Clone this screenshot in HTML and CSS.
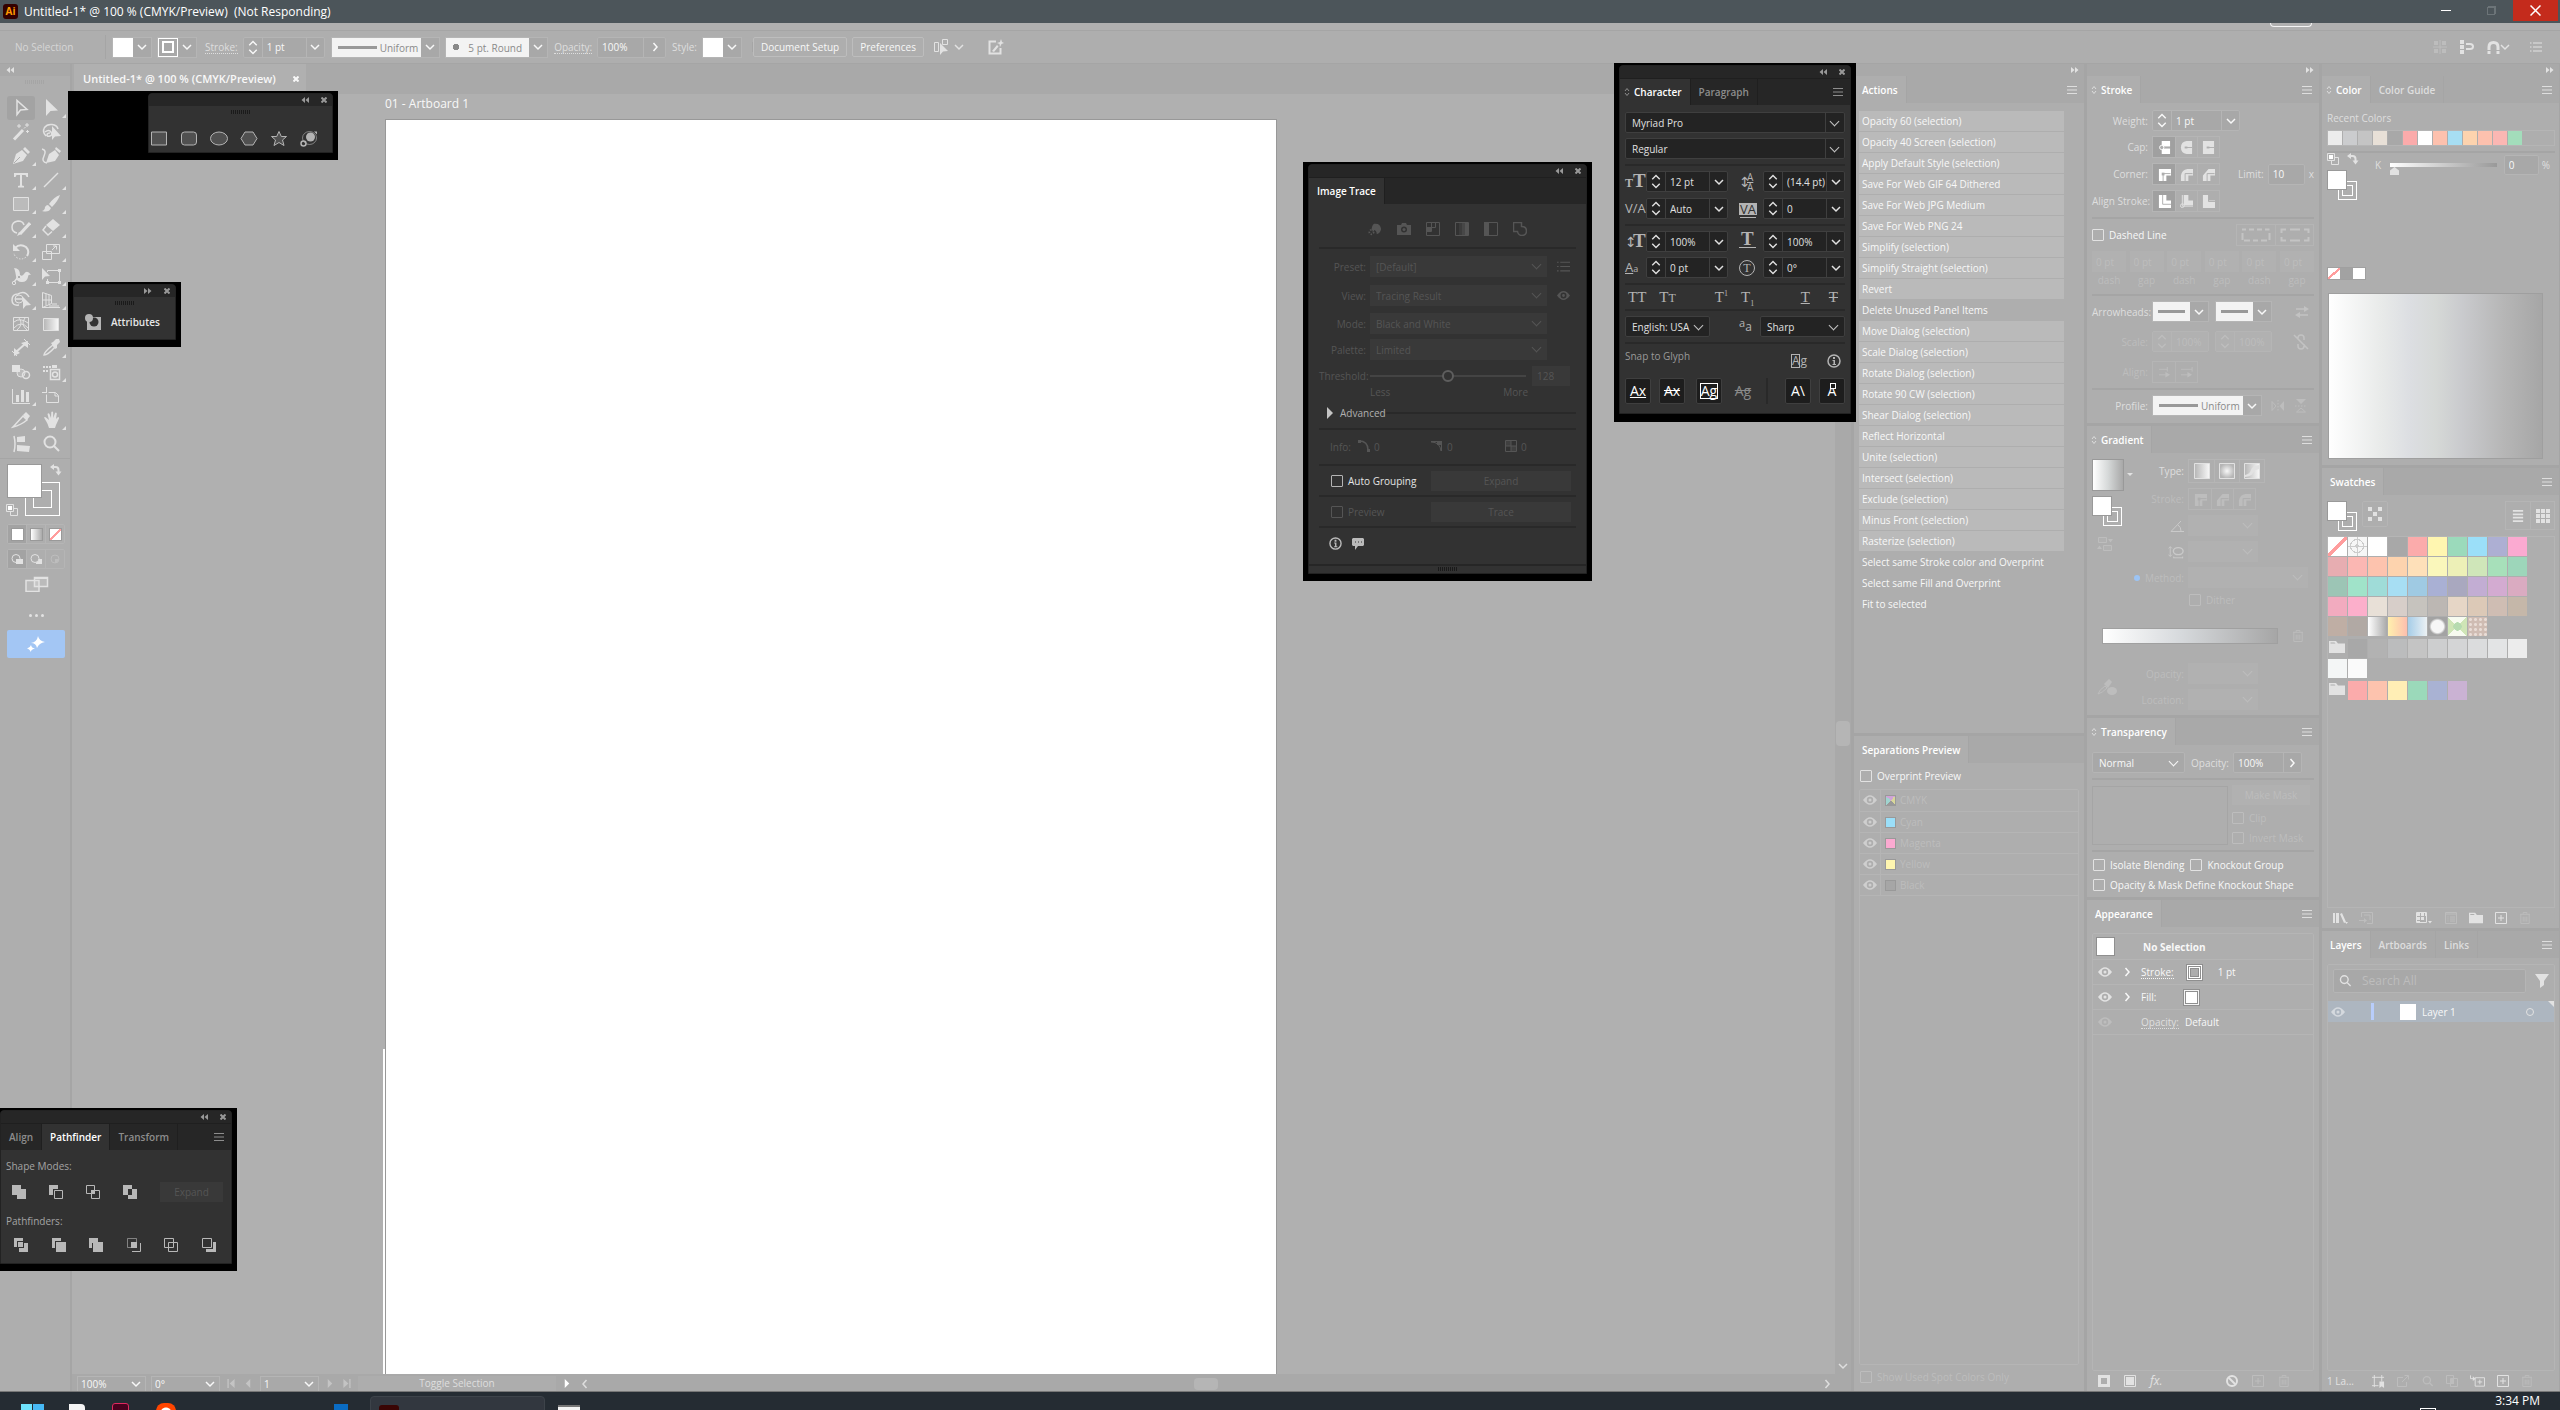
FILE: index.html
```html
<!DOCTYPE html>
<html lang="en">
<head>
    <meta charset="UTF-8">
    <meta name="viewport" content="width=device-width, initial-scale=1.0">
    <title>Untitled-1* @ 100 % (CMYK/Preview)</title>
    <link rel="stylesheet" href="styles.css">
</head>
<body>
<svg class="sprite" aria-hidden="true">
    <defs>
        <linearGradient id="fade"><stop offset="0" stop-color="currentColor" stop-opacity=".1"/><stop offset="1" stop-color="currentColor"/></linearGradient>
        <radialGradient id="glow"><stop offset="0" stop-color="currentColor"/><stop offset="1" stop-color="currentColor" stop-opacity=".1"/></radialGradient>
    </defs>
    <!-- common -->
    <symbol id="chev" viewBox="0 0 10 10"><path d="M1 3l4 4 4-4" class="ln w15"/></symbol>
    <symbol id="chev-r" viewBox="0 0 10 10"><path d="M3.500 1l3.500 4-3.500 4" class="ln w15"/></symbol>
    <symbol id="chev-l" viewBox="0 0 10 10"><path d="M6.500 1L3 5l3.500 4" class="ln w15"/></symbol>
    <symbol id="step" viewBox="0 0 10 16"><path d="M1 5.500l4-4 4 4M1 10.500l4 4 4-4" class="ln w15"/></symbol>
    <symbol id="updown" viewBox="0 0 6 10"><path d="M1 4l2-2.500L5 4M1 6l2 2.500L5 6" class="ln"/></symbol>
    <symbol id="dbl-l" viewBox="0 0 8 6"><path d="M4 0v6L.5 3zM8 0v6L4.500 3z"/></symbol>
    <symbol id="dbl-r" viewBox="0 0 8 6"><path d="M0 0v6l3.500-3zM4 0v6l3.500-3z"/></symbol>
    <symbol id="x" viewBox="0 0 6 6"><path d="M.5.5l5 5M5.500.5l-5 5" class="ln w2"/></symbol>
    <symbol id="burger" viewBox="0 0 10 8"><path d="M0 .5h10M0 4h10M0 7.500h10" class="ln"/></symbol>
    <symbol id="eye" viewBox="0 0 14 10"><path fill-rule="evenodd" d="M0 5q7-9.500 14 0-7 9.500-14 0zm7-3.200a3.200 3.200 0 1 0 0 6.400 3.200 3.200 0 0 0 0-6.400zm0 1.700a1.500 1.500 0 1 1 0 3 1.500 1.500 0 0 1 0-3z"/></symbol>
    <symbol id="tri-r" viewBox="0 0 6 12"><path d="M0 0l6 6-6 6z"/></symbol>
    <symbol id="tri-l" viewBox="0 0 6 12"><path d="M6 0L0 6l6 6z"/></symbol>
    <symbol id="first" viewBox="0 0 8 10"><path d="M8 0L2.500 5 8 10zM0 0h1.500v10H0z"/></symbol>
    <symbol id="last" viewBox="0 0 8 10"><path d="M0 0l5.500 5L0 10zM6.500 0H8v10H6.500z"/></symbol>
    <symbol id="plus" viewBox="0 0 12 12"><path d="M.5.5h11v11H.5zM6 3v6M3 6h6" class="ln"/></symbol>
    <symbol id="trash" viewBox="0 0 12 13"><path d="M.5 2.500h11M4 2V.5h4V2M1.500 2.500v10h9v-10M4 5v5.500M6 5v5.500M8 5v5.500" class="ln"/></symbol>
    <symbol id="folder" viewBox="0 0 16 12"><path d="M0 0h7l2 2.500h7V12H0z"/><path d="M1.500 1.500h4l1 1h-5z" class="cut"/></symbol>
    <symbol id="swap" viewBox="0 0 12 12"><path d="M3 3h2.500q3 0 3 3v2" class="ln w2"/><path d="M4 0v6L0 3zM5.500 7.500h6l-3 4z"/></symbol>
    <symbol id="deflt" viewBox="0 0 12 12"><path d="M4.500 8v3.500h7v-7H8M.5.5h7v7h-7z" class="ln"/><path d="M2 2h4v4H2z" class="white"/></symbol>
    <symbol id="list" viewBox="0 0 12 9"><path d="M0 .5h1.500M3 .5h9M0 4.500h1.500M3 4.500h9M0 8.500h1.500M3 8.500h9" class="ln"/></symbol>
    <symbol id="info" viewBox="0 0 14 14"><circle cx="7" cy="7" r="6" class="ln w15"/><path d="M6 3h2v2H6zM5.500 6H8v4h1v1H5.500v-1h1V7h-1z"/></symbol>
    <!-- tools -->
    <symbol id="t-select" viewBox="0 0 20 20"><path d="M6 2.500v14l3.500-4.500 6.500-.5z" class="ln w15"/></symbol>
    <symbol id="t-direct" viewBox="0 0 20 20"><path d="M5 1v17l4.500-5 7.500-.5z"/></symbol>
    <symbol id="t-wand" viewBox="0 0 20 20"><path d="M3 17.500 12 8" class="ln w3"/><path d="M13 6.500l1.500-1.500M16 1v4M14 3h4M8 2v4M6 4h4M16.500 8v3M15 9.500h3" class="ln"/></symbol>
    <symbol id="t-lasso" viewBox="0 0 20 20"><path d="M5 14q-4-4-1.500-8.500Q6 2 11 2.500T17 7M4 10q4-3 6 0t-1 4q-3 1-3-1t3-2" class="ln w15"/><path d="M11 4v14l3-3.500 6-.5z"/></symbol>
    <symbol id="t-pen" viewBox="0 0 20 20"><path d="M2 18l3-10 6-4 5 5-4 6zM12 3l2-2 5 5-2 2z"/><path d="M3 17l6-6" class="ln cutln"/></symbol>
    <symbol id="t-curv" viewBox="0 0 20 20"><path d="M5 17l3-9 6-4 4 5-4 6zM14 3l1-2 5 4-1.500 2z"/><path d="M1 3q5 1 2 7t3 7" class="ln w15"/></symbol>
    <symbol id="t-type" viewBox="0 0 20 20"><path d="M3 3h14v4h-1.500l-1-2H11v10.500l2 .5v1.500H7V16l2-.5V5H5.500l-1 2H3z"/></symbol>
    <symbol id="t-line" viewBox="0 0 20 20"><path d="M3 17 17 3" class="ln w15"/></symbol>
    <symbol id="t-rect" viewBox="0 0 20 20"><path d="M2.500 3.500h15v13h-15z" class="ln soft"/></symbol>
    <symbol id="t-brush" viewBox="0 0 20 20"><path d="M19 1q-6 2-11 9l3 3q6-6 8-12zM7 11l3 3q-2 5-9 3 3-1 3-4 1-2 3-2z"/></symbol>
    <symbol id="t-shaper" viewBox="0 0 20 20"><path d="M6 15q-5-1-5-6t6-6q5 0 6 4" class="ln w15"/><path d="M9 16l10-11" class="ln w3"/><path d="M6 18l2-4 2.500 2z"/></symbol>
    <symbol id="t-eraser" viewBox="0 0 20 20"><path d="M12 1l7 6-7 6-7-6z"/><path d="M5 8l-3 4 5 5 4-3.500" class="ln w15"/></symbol>
    <symbol id="t-rotate" viewBox="0 0 20 20"><path d="M4 6q5-5 11-1 4 4 1 9" class="ln w2"/><path d="M15 15q-5 4-10 0-2-2-2-4" class="ln dots"/><path d="M2 2v7h7z"/></symbol>
    <symbol id="t-scale" viewBox="0 0 20 20"><path d="M5.500 2.500h13v9h-13zM1.500 9.500h9v8h-9zM11 8l4-4M12 4h3.500v3.500" class="ln"/></symbol>
    <symbol id="t-width" viewBox="0 0 20 20"><path d="M3 16l5-6" class="ln w15"/><path d="M3 2q6 0 6 7 2 2 4-1 3-5 7 1-3-1-3 2-1 5-6 5-6 0-6-6-1-6-2-8z"/><circle cx="3" cy="17" r="1.700" class="ln"/><circle cx="8" cy="11" r="1.700" class="ln bgfill"/></symbol>
    <symbol id="t-free" viewBox="0 0 20 20"><path d="M1 2v12l3-3.500 5-.5z"/><path d="M6.500 6V4.500h12v12h-12V13" class="ln"/><path d="M17 3h3v3h-3zM17 15h3v3h-3zM5 15h3v3H5z"/></symbol>
    <symbol id="t-builder" viewBox="0 0 20 20"><path d="M8 15q-7 1-7-5t6-6q7-4 11 3M4 9h8" class="ln w15"/><circle cx="8" cy="9" r="4" class="ln"/><path d="M12 7v12l3-3.500 5-.5z"/></symbol>
    <symbol id="t-persp" viewBox="0 0 20 20"><path d="M1.500 2.500v15l9-4v-8zM5 3.500v12M1.500 10h9M8 4.500v10M11 14h5M8 16h10M1 17.500h18" class="ln"/></symbol>
    <symbol id="t-mesh" viewBox="0 0 20 20"><path d="M2.500 3.500h15v13h-15zM3 8q6-5 14 1M3 14q7-8 14 0M8 4q5 6-2 12M14 4q-5 6 2 12" class="ln"/></symbol>
    <symbol id="t-grad" viewBox="0 0 20 20"><path d="M2.500 4.500h15v12h-15z" fill="url(#fade)" stroke="currentColor"/></symbol>
    <symbol id="t-measure" viewBox="0 0 20 20"><path d="M5 14l9-8" class="ln w2"/><path d="M3 10v8l6-3zM17 10V3l-7 2z"/><path d="M1 13l5 5M13 1l6 6" class="ln"/></symbol>
    <symbol id="t-eyedrop" viewBox="0 0 20 20"><path d="M3 17q0-3 9-10l2 2q-7 8-11 8z" class="ln w15"/><path d="M10 5l2-1 3-3h3l1 3-3 3v3l-2 1z"/></symbol>
    <symbol id="t-blend" viewBox="0 0 20 20"><path d="M1 3h8v7H1z"/><circle cx="10" cy="11" r="4" class="ln soft"/><circle cx="15" cy="13" r="3.500" class="ln w15"/></symbol>
    <symbol id="t-spray" viewBox="0 0 20 20"><path d="M9.500 7.500h9v10h-9z" class="ln w15"/><path d="M11 3h5v3h-5zM2 4h2v2H2zM5 4h2v2H5zM8 4h2v2H8zM2 8h2v2H2zM5 8h2v2H5z"/><circle cx="14" cy="12.500" r="2.500" class="ln w15"/></symbol>
    <symbol id="t-graph" viewBox="0 0 20 20"><path d="M1.500 3v14.500H19" class="ln"/><path d="M5 9h3v7H5zM10 4h3v12h-3zM15 6h3v10h-3z"/></symbol>
    <symbol id="t-artb" viewBox="0 0 20 20"><path d="M5.500 1v5M1 6.500h5M5.500 8.500v8h12v-7l-3-3h-7M14 7v3h3" class="ln"/></symbol>
    <symbol id="t-slice" viewBox="0 0 20 20"><path d="M2 17L12 6l4 4q-6 5-14 7z" class="ln w15"/><path d="M12 5l3-3 4 4-3 4z"/></symbol>
    <symbol id="t-hand" viewBox="0 0 20 20"><path d="M5 11L3 7.500q1-1 2 0L8 10 6.500 4q1-1.500 2 0L10 8l.3-6q1-1 1.800 0l.2 6 1.700-5q1.200-1 1.800.5L15 9l2-2q1.500 0 1 1.500L15 15l-1 3H8q-1-4-3-7z"/></symbol>
    <symbol id="t-print" viewBox="0 0 20 20"><path d="M3 2q2 8 0 16" class="ln w15"/><path d="M6 3l8-1v6H6zM6 11l13 1-1 6-12-1z"/></symbol>
    <symbol id="t-zoom" viewBox="0 0 20 20"><circle cx="9" cy="8" r="5.500" class="ln w2"/><path d="M13 12l5 5" class="ln w2"/></symbol>
    <symbol id="t-screen" viewBox="0 0 24 16"><path d="M1 4.500h13v11H1z" class="ln soft w15"/><path d="M9.500 1.500h13v9h-13z" class="ln soft w15"/><path d="M9 1h14v2H9z"/></symbol>
    <symbol id="d-norm" viewBox="0 0 12 10"><circle cx="5" cy="4.500" r="4" class="ln"/><path d="M5 5h7v5H5z"/></symbol>
    <symbol id="d-back" viewBox="0 0 12 10"><path d="M6 5h6v5H6z"/><circle cx="5" cy="4.500" r="4" class="ln bgfill"/></symbol>
    <symbol id="d-in" viewBox="0 0 12 10"><circle cx="6" cy="5" r="4" class="ln"/><path d="M6 5h4l-2 4H6z"/></symbol>
    <symbol id="spark" viewBox="0 0 18 16"><path d="M11 0q1 5 7 6-6 1-8 6-1-5-6-5 6-1 7-7zM4 9q.5 3 4 3.500-3.500.5-4.500 3.500Q3 13 0 12.500 3 12 4 9z"/></symbol>
    <!-- shapes -->
    <symbol id="s-rect" viewBox="0 0 18 14"><path d="M1.500.5h15v13h-15z" class="shape"/></symbol>
    <symbol id="s-round" viewBox="0 0 18 14"><rect x="1.500" y=".5" width="15" height="13" rx="3" class="shape"/></symbol>
    <symbol id="s-ell" viewBox="0 0 18 14"><ellipse cx="9" cy="7" rx="8.500" ry="6.500" class="shape"/></symbol>
    <symbol id="s-hex" viewBox="0 0 18 14"><path d="M5 .5h8L17 7l-4 6.500H5L1 7z" class="shape"/></symbol>
    <symbol id="s-star" viewBox="0 0 18 16"><path d="M9 1l2.300 5h5.200l-4 3.500L14 15l-5-3-5 3 1.500-5.500-4-3.500h5.200z" class="shape"/></symbol>
    <symbol id="s-flare" viewBox="0 0 18 16"><ellipse cx="9.500" cy="7.500" rx="7" ry="6.500" class="ln" opacity=".6"/><circle cx="10.500" cy="6.500" r="4.500"/><circle cx="3.500" cy="13" r="2.500" class="ln w15"/><path d="M14 1h3v3z"/></symbol>
    <symbol id="attr" viewBox="0 0 16 16"><path d="M2 3h14v13H2z"/><circle cx="9" cy="8" r="4.500" class="cut"/><circle cx="4" cy="4" r="4"/></symbol>
    <!-- pathfinder -->
    <symbol id="p-unite" viewBox="0 0 14 14"><path d="M0 0h9v4h5v10H5v-4H0z"/></symbol>
    <symbol id="p-minus" viewBox="0 0 14 14"><path d="M0 0h9v4H4v6H0z"/><path d="M5.500 5.500h8v8h-8z" class="ln"/></symbol>
    <symbol id="p-inter" viewBox="0 0 14 14"><path d="M.5.5h8v8h-8zM5.500 5.500h8v8h-8z" class="ln"/><path d="M5 5h4v4H5z"/></symbol>
    <symbol id="p-excl" viewBox="0 0 14 14"><path fill-rule="evenodd" d="M0 0h9v4h5v10H5v-4H0zm5 4v6h4V4z"/></symbol>
    <symbol id="p-divide" viewBox="0 0 14 14"><path d="M0 0h9v3H3v6H0zM4 4h5v5H4zM10 5h4v9H5v-4h5z"/></symbol>
    <symbol id="p-trim" viewBox="0 0 14 14"><path d="M0 0h9v3H3v7H0zM4 4h10v10H4z"/></symbol>
    <symbol id="p-merge" viewBox="0 0 14 14"><path d="M0 0h9v4h5v10H4V5H3v5H0z"/></symbol>
    <symbol id="p-crop" viewBox="0 0 14 14"><path d="M.5.5h9v9h-9z" class="ln" opacity=".6"/><path d="M4 4h6v6H4z"/><path d="M13.500 5v8.500H5" class="ln"/></symbol>
    <symbol id="p-outline" viewBox="0 0 14 14"><path d="M.5.5h9v9h-9zM4.500 4.500h9v9h-9z" class="ln"/></symbol>
    <symbol id="p-back" viewBox="0 0 14 14"><path d="M.5.5h9v9h-9z" class="ln"/><path d="M11 4h3v10H4v-3h7z"/></symbol>
    <!-- image trace -->
    <symbol id="i-auto" viewBox="0 0 16 14"><path d="M7 1q7-1 8 6-1 5-5 6 0-4-3-5-2 0-3 1 0-6 3-8z"/><circle cx="4" cy="10.500" r="2.500" class="ln w2 dots"/></symbol>
    <symbol id="i-cam" viewBox="0 0 14 12"><path fill-rule="evenodd" d="M0 2h4l1-2h4l1 2h4v10H0zm7 1.500a3 3 0 1 0 0 6 3 3 0 0 0 0-6z"/><circle cx="7" cy="6.500" r="1.500"/></symbol>
    <symbol id="i-low" viewBox="0 0 14 14"><path d="M.5.5h13v13H.5zM5.500.5v9H.5M.5 5.500h9v-5" class="ln"/><path d="M1 6h4v4H1z"/></symbol>
    <symbol id="i-gray" viewBox="0 0 14 14"><path d="M.5.5h13v13H.5z" class="ln"/><path d="M4 1h3v12H4z" opacity=".3"/><path d="M7 1h3v12H7z" opacity=".6"/><path d="M10 1h3v12h-3z"/></symbol>
    <symbol id="i-bw" viewBox="0 0 14 14"><path d="M.5.5h13v13H.5z" class="ln"/><path d="M0 0h5v14H0z"/></symbol>
    <symbol id="i-out" viewBox="0 0 14 14"><path d="M.5.5h8v4q5 0 5 4.500t-5 4.500Q5 13 4.500 9.500h-4z" class="ln w15"/></symbol>
    <symbol id="i-path" viewBox="0 0 12 12"><path d="M1 1q9 0 9 9" class="ln w15"/><path d="M0 0h3v3H0zM9 9h3v3H9z"/></symbol>
    <symbol id="i-anch" viewBox="0 0 12 12"><path d="M0 2q9 0 10 9" class="ln"/><path d="M0 1h11v10h-1V5H6V2H0z"/></symbol>
    <symbol id="i-cols" viewBox="0 0 12 12"><path d="M.5.5h11v11H.5zM6 0v12M0 6h12" class="ln"/><path d="M1 1h5v5H1zM6 6h5v5H6z" opacity=".4"/></symbol>
    <symbol id="i-chat" viewBox="0 0 12 12"><path d="M1 0h10l1 1v6l-1 1H6l-3 4V8H1L0 7V1z"/><path d="M3 4h1M6 4h1M9 4h1" class="ln cutln"/></symbol>
    <!-- stroke -->
    <symbol id="c-butt" viewBox="0 0 14 14"><path d="M4 0h9v6H4zM4 8h9v6H4z"/><path d="M4 7h9" class="ln cutln"/><circle cx="4" cy="7" r="2.300" class="ln bgfill"/></symbol>
    <symbol id="c-round" viewBox="0 0 14 14"><path d="M13 0v14H7Q1 13 1 7t6-7z"/><path d="M6 7h7" class="ln cutln"/><path d="M5 6h3v2H5z" class="cut"/></symbol>
    <symbol id="c-proj" viewBox="0 0 14 14"><path d="M1 0h12v14H1z"/><path d="M6 7h7" class="ln cutln"/><path d="M5 6h3v2H5z" class="cut"/></symbol>
    <symbol id="j-miter" viewBox="0 0 14 14"><path d="M1 1h13v7H9v6H1z"/><path d="M5.500 14V6h8" class="ln cutln"/><path d="M4 5h3v3H4z" class="cut"/></symbol>
    <symbol id="j-round" viewBox="0 0 14 14"><path d="M14 1v7H9v6H1V8q1-6 7-7z"/><path d="M5.500 14V6h8" class="ln cutln"/></symbol>
    <symbol id="j-bevel" viewBox="0 0 14 14"><path d="M14 1v7H9v6H1V8l6-7z"/><path d="M5.500 14V6h8" class="ln cutln"/></symbol>
    <symbol id="a-mid" viewBox="0 0 14 14"><path d="M1 0h8v6h5v8H1z"/><path d="M5 0v10h9" class="ln cutln"/></symbol>
    <symbol id="a-in" viewBox="0 0 14 14"><path d="M4 0h5v6h5v5H4z"/><path d="M2.500 0v12H14" class="ln"/><circle cx="2.500" cy="11.500" r="2" class="ln"/></symbol>
    <symbol id="a-out" viewBox="0 0 14 14"><path d="M1 0h6v6h7v8H1z"/><path d="M7 0v7h7" class="ln cutln"/></symbol>
    <symbol id="dash-a" viewBox="0 0 30 14"><path d="M1.500 12V5M1 1.500h4M8 1.500h5M16 1.500h5M24 1.500h4.500M28.500 5v7M3 12.500h6M12 12.500h5M20 12.500h6" class="ln w2"/></symbol>
    <symbol id="dash-b" viewBox="0 0 30 14"><path d="M1.500 5V1.500H6M24 1.500h4.500V5M28.500 9v3.500H24M6 12.500H1.500V9M10 1.500h10M10 12.500h10" class="ln w2"/></symbol>
    <symbol id="arrows" viewBox="0 0 14 12"><path d="M1 3h10M3 9h10" class="ln w15"/><path d="M9 0l5 3-5 3zM5 6L0 9l5 3z"/></symbol>
    <symbol id="unlink" viewBox="0 0 16 16"><path d="M5 6V4q0-3 3-3t3 3v2M5 10v2q0 3 3 3t3-3v-2M1 1l14 14" class="ln w15"/></symbol>
    <symbol id="al-a" viewBox="0 0 14 12"><path d="M1 2.500h9M1 8.500h8M10 0v5" class="ln"/><path d="M8 5.500l5 3-5 3z"/></symbol>
    <symbol id="al-b" viewBox="0 0 14 12"><path d="M1 2.500h12M1 8.500h8M13 0v5" class="ln"/><path d="M8 5.500l5 3-5 3z"/></symbol>
    <symbol id="flip-h" viewBox="0 0 14 12"><path d="M1 1.500v9L5 6z" class="ln"/><path d="M13 1v10L8.500 6z"/><path d="M7 0v12" class="ln dots"/></symbol>
    <symbol id="flip-v" viewBox="0 0 12 14"><path d="M1.500 13h9L6 9z" class="ln"/><path d="M1 0h10L6 5z"/><path d="M0 7h12" class="ln dots"/></symbol>
    <symbol id="angle" viewBox="0 0 14 12"><path d="M14 11.500H1L11 1M8 5q3 2 3 6" class="ln"/></symbol>
    <symbol id="aspect" viewBox="0 0 18 14"><path d="M2.500 1v11M.5 3l2-2 2 2M.5 10l2 2 2-2M6 13.500h11M6.500 12v2M16.500 12v2" class="ln"/><ellipse cx="11.500" cy="6" rx="5.500" ry="4" class="ln w15"/></symbol>
    <symbol id="g-lin" viewBox="0 0 16 16"><path d="M.5.5h15v15H.5z" fill="url(#fade)" stroke="currentColor"/></symbol>
    <symbol id="g-rad" viewBox="0 0 16 16"><path d="M.5.5h15v15H.5z" fill="url(#glow)" stroke="currentColor"/></symbol>
    <symbol id="g-free" viewBox="0 0 16 16"><path d="M.5.5h15v15H.5z" fill="url(#fade)" stroke="currentColor"/><path d="M1 12q5-1 6-5t8-5v4q-5 1-6 4t-8 4z"/></symbol>
    <symbol id="rev" viewBox="0 0 16 14"><path d="M1.500.5h8v5h-8zM6.500 8.500h8v5h-8z" class="ln soft"/><path d="M11 2h5l-2.500 3.500zM0 12h5L2.500 8.500z"/></symbol>
    <symbol id="pick" viewBox="0 0 20 16"><path d="M1 15q1-4 7-8l2 2q-5 5-9 6z" class="ln"/><path d="M7 5l5-5 3 3-4 6z"/><ellipse cx="15" cy="12" rx="5" ry="4"/></symbol>
    <!-- footer and header icons -->
    <symbol id="box" viewBox="0 0 12 12"><path d="M1.500 1.500h9v9h-9z" class="ln w3"/></symbol>
    <symbol id="boxin" viewBox="0 0 12 12"><path d="M.5.5h11v11H.5z" class="ln"/><path d="M2 2h8v8H2z"/></symbol>
    <symbol id="nope" viewBox="0 0 12 12"><circle cx="6" cy="6" r="5" class="ln w2"/><path d="M2.500 2.500l7 7" class="ln w2"/></symbol>
    <symbol id="lib" viewBox="0 0 16 12"><path d="M1 1h2v10H1zM4 1h3v10H4zM8 2l2-1 4 9-2 1zM13 10h3l-1.500 2z"/></symbol>
    <symbol id="addlib" viewBox="0 0 14 12"><path d="M2.500 5V.5h11v11H8M0 8.500h6M5 3h6v5" class="ln"/><path d="M5 6l3 2.500L5 11z"/></symbol>
    <symbol id="kinds" viewBox="0 0 16 12"><path d="M1 1h3v3H1zM5 1h3v3H5zM9 1h2v3H9zM1 5h3v3H1zM5 5h3v3H5zM1 9h3v2H1zM12 9h4l-2 2.500z"/><path d="M.5.5h10v10H.5z" class="ln"/></symbol>
    <symbol id="opts" viewBox="0 0 12 12"><path d="M.5.5h11v11H.5zM.5 2h11M2.500 5h1M5 5h5M2.500 7h1M5 7h5M2.500 9h1M5 9h5" class="ln"/></symbol>
    <symbol id="rows" viewBox="0 0 12 14"><path d="M0 1h12M0 5h12M0 9h12M0 13h12" class="ln w2"/></symbol>
    <symbol id="grid" viewBox="0 0 14 14"><path d="M0 0h4v4H0zM5 0h4v4H5zM10 0h4v4h-4zM0 5h4v4H0zM5 5h4v4H5zM10 5h4v4h-4zM0 10h4v4H0zM5 10h4v4H5zM10 10h4v4h-4z"/></symbol>
    <symbol id="five" viewBox="0 0 14 14"><path d="M0 0h4v4H0zM10 0h4v4h-4zM5 5h4v4H5zM0 10h4v4H0zM10 10h4v4h-4z"/></symbol>
    <symbol id="funnel" viewBox="0 0 14 14"><path d="M0 0h14L9 7v4l-4 3V7z"/></symbol>
    <symbol id="mkart" viewBox="0 0 14 14"><path d="M2.500 0v13M0 2.500h13M10.500 0v7M0 11.500h7" class="ln"/><path d="M8 7h5v7l-2.500-2L8 14z"/></symbol>
    <symbol id="export" viewBox="0 0 12 12"><path d="M6 2.500H.5v9h9V7M5 7l6-6M7.500.5h4v4" class="ln"/></symbol>
    <symbol id="mask" viewBox="0 0 12 12"><path d="M.5.5h7v8h-7zM4.500 3.500h7v8h-7z" class="ln"/><path d="M4 4h4v5H4z"/></symbol>
    <symbol id="sublayer" viewBox="0 0 16 12"><path d="M5.500 2.500h10v9h-10zM10.500 4.500v5M8 7h5M.5 0v3.500H4" class="ln"/><path d="M3 1l3 2.500L3 6z"/></symbol>
    <symbol id="alignto" viewBox="0 0 16 16"><path d="M1.500 3.500h4v9h-4zM9.500.5h5v5h-5z" class="ln"/><path d="M7 4v12l3-3.500 5-.5z"/></symbol>
    <symbol id="generate" viewBox="0 0 16 16"><path d="M8 2.500H1.500v12h11V9" class="ln w2"/><path d="M13 0l1 3 2 1-2.500 1L12 8l-.5-3L9 4l3-1zM4 12l5-6 1.500 1.500L6 13z"/></symbol>
    <symbol id="quad" viewBox="0 0 14 14"><path d="M1 1h4v4H1zM9 1h4v4H9zM1 9h4v4H1zM9 9h4v4H9z"/><path d="M7 0v14M0 7h14" class="ln"/></symbol>
    <symbol id="snapm" viewBox="0 0 14 14"><path d="M0 0h4v4H0zM0 5h4v4H0zM0 10h4v4H0z"/><path d="M6 4h4q3 0 3 2.500T10 9H6" class="ln w2"/></symbol>
    <symbol id="magnet" viewBox="0 0 12 13"><path d="M1.500 9V6q0-4.500 4.500-4.500T10.500 6v3" class="ln w3"/><path d="M0 10h3v3H0zM9 10h3v3H9z"/></symbol>
</svg>

<header class="titlebar">
    <span class="app-icon">Ai</span>
    <h1 class="title">Untitled-1* @ 100 % (CMYK/Preview)&nbsp; (Not Responding)</h1>
    <div class="window-buttons">
        <button aria-label="Minimize"><span class="min"></span></button>
        <button aria-label="Restore"><span class="restore"></span></button>
        <button class="close" aria-label="Close"><svg width="11" height="11" viewBox="0 0 11 11"><path d="M.5.5l10 10M10.500.5l-10 10" class="ln w15"/></svg></button>
    </div>
</header>
<div class="menu-strip"><span class="share"></span></div>

<div class="control-bar">
    <span class="no-selection">No Selection</span>
    <button class="pick pick-white" aria-label="Fill"><i></i><svg class="i10"><use href="#chev"/></svg></button>
    <button class="pick pick-stroke" aria-label="Stroke color"><i></i><svg class="i10"><use href="#chev"/></svg></button>
    <label class="dotted dim" for="cb-stroke">Stroke:</label>
    <span class="spin cb-weight"><svg class="stepper"><use href="#step"/></svg><input id="cb-stroke" value="1 pt"><button aria-label="Weights"><svg class="i10"><use href="#chev"/></svg></button></span>
    <button class="pick brush"><i class="rule"></i><b>Uniform</b><svg class="i10"><use href="#chev"/></svg></button>
    <button class="pick brush round"><i class="dot"></i><b>5 pt. Round</b><svg class="i10"><use href="#chev"/></svg></button>
    <label class="dotted dim" for="cb-op">Opacity:</label>
    <span class="spin cb-opacity"><input id="cb-op" value="100%"><button aria-label="Opacity slider"><svg class="i10"><use href="#chev-r"/></svg></button></span>
    <span class="dim">Style:</span>
    <button class="pick pick-white style-pick" aria-label="Style"><i></i><svg class="i10"><use href="#chev"/></svg></button>
    <button class="outline doc-setup">Document Setup</button>
    <button class="outline prefs">Preferences</button>
    <button class="plain" aria-label="Align to"><svg class="i16"><use href="#alignto"/></svg><svg class="i10"><use href="#chev"/></svg></button>
    <button class="plain gen" aria-label="Recolor"><svg class="i16"><use href="#generate"/></svg></button>
    <div class="control-right">
        <svg class="i14 off"><use href="#quad"/></svg>
        <svg class="i14"><use href="#snapm"/></svg>
        <span><svg class="i13"><use href="#magnet"/></svg><svg class="i10"><use href="#chev"/></svg></span>
        <svg class="i12"><use href="#list"/></svg>
    </div>
</div>

<div class="workspace">
    <aside class="toolbar">
        <div class="dock-head left"><svg class="dbl"><use href="#dbl-l"/></svg></div>
        <div class="grip"></div>
        <div class="tools">
            <button class="active" aria-label="Selection"><svg><use href="#t-select"/></svg></button><button class="more" aria-label="Direct selection"><svg><use href="#t-direct"/></svg></button>
            <button aria-label="Magic wand"><svg><use href="#t-wand"/></svg></button><button aria-label="Lasso"><svg><use href="#t-lasso"/></svg></button>
            <button class="more" aria-label="Pen"><svg><use href="#t-pen"/></svg></button><button aria-label="Curvature"><svg><use href="#t-curv"/></svg></button>
            <button class="more" aria-label="Type"><svg><use href="#t-type"/></svg></button><button class="more" aria-label="Line"><svg><use href="#t-line"/></svg></button>
            <button class="more" aria-label="Rectangle"><svg><use href="#t-rect"/></svg></button><button class="more" aria-label="Paintbrush"><svg><use href="#t-brush"/></svg></button>
            <button class="more" aria-label="Shaper"><svg><use href="#t-shaper"/></svg></button><button class="more" aria-label="Eraser"><svg><use href="#t-eraser"/></svg></button>
            <button class="more" aria-label="Rotate"><svg><use href="#t-rotate"/></svg></button><button class="more" aria-label="Scale"><svg><use href="#t-scale"/></svg></button>
            <button class="more" aria-label="Width"><svg><use href="#t-width"/></svg></button><button class="more" aria-label="Free transform"><svg><use href="#t-free"/></svg></button>
            <button class="more" aria-label="Shape builder"><svg><use href="#t-builder"/></svg></button><button class="more" aria-label="Perspective grid"><svg><use href="#t-persp"/></svg></button>
            <button aria-label="Mesh"><svg><use href="#t-mesh"/></svg></button><button aria-label="Gradient"><svg><use href="#t-grad"/></svg></button>
            <button aria-label="Measure"><svg><use href="#t-measure"/></svg></button><button class="more" aria-label="Eyedropper"><svg><use href="#t-eyedrop"/></svg></button>
            <button aria-label="Blend"><svg><use href="#t-blend"/></svg></button><button class="more" aria-label="Symbol sprayer"><svg><use href="#t-spray"/></svg></button>
            <button class="more" aria-label="Column graph"><svg><use href="#t-graph"/></svg></button><button aria-label="Artboard"><svg><use href="#t-artb"/></svg></button>
            <button class="more" aria-label="Slice"><svg><use href="#t-slice"/></svg></button><button class="more" aria-label="Hand"><svg><use href="#t-hand"/></svg></button>
            <button aria-label="Print tiling"><svg><use href="#t-print"/></svg></button><button aria-label="Zoom"><svg><use href="#t-zoom"/></svg></button>
        </div>
        <div class="fillstroke big"><span class="stroke-box"></span><span class="fill-box"></span><svg class="i12 fs-swap"><use href="#swap"/></svg><svg class="i12 fs-default"><use href="#deflt"/></svg></div>
        <div class="modes"><button class="on" aria-label="Color"><i class="m-white"></i></button><button aria-label="Gradient fill"><i class="m-grad"></i></button><button aria-label="None"><i class="m-none"></i></button></div>
        <div class="modes draw"><button class="on" aria-label="Draw normal"><svg><use href="#d-norm"/></svg></button><button aria-label="Draw behind"><svg><use href="#d-back"/></svg></button><button class="off" aria-label="Draw inside"><svg><use href="#d-in"/></svg></button></div>
        <button class="screen-mode" aria-label="Screen mode"><svg><use href="#t-screen"/></svg></button>
        <button class="edit-tools" aria-label="Edit toolbar"><i></i><i></i><i></i></button>
        <button class="spark" aria-label="Generate"><svg><use href="#spark"/></svg></button>
    </aside>

    <main class="document">
        <div class="doc-tabs"><div class="doc-tab">Untitled-1* @ 100 % (CMYK/Preview)<svg class="x"><use href="#x"/></svg></div></div>
        <div class="doc-view">
            <div class="canvas">
                <p class="artboard-name">01 - Artboard 1</p>
                <div class="artboard"></div>
            </div>
            <div class="vscroll"><span class="thumb"></span><svg class="i10"><use href="#chev"/></svg></div>
        </div>
        <div class="status">
            <span class="stat-field"><input aria-label="Zoom" value="100%"><svg class="i10"><use href="#chev"/></svg></span>
            <span class="stat-field"><input aria-label="Rotation" value="0°"><svg class="i10"><use href="#chev"/></svg></span>
            <svg class="nav off"><use href="#first"/></svg><svg class="nav off"><use href="#tri-l"/></svg>
            <span class="stat-field short"><input aria-label="Artboard number" value="1"><svg class="i10"><use href="#chev"/></svg></span>
            <svg class="nav off"><use href="#tri-r"/></svg><svg class="nav off"><use href="#last"/></svg>
            <span class="stat-text">Toggle Selection</span>
            <svg class="nav"><use href="#tri-r"/></svg>
            <div class="hscroll"><svg class="i10"><use href="#chev-l"/></svg><span class="thumb"></span><svg class="i10"><use href="#chev-r"/></svg></div>
        </div>
    </main>

    <section class="dock first">
        <div class="dock-head"><svg class="dbl"><use href="#dbl-r"/></svg></div>
        <div class="panel actions">
            <div class="tabs"><h2 class="tab on">Actions</h2><svg class="burger"><use href="#burger"/></svg></div>
            <ul class="action-list">
                <li>Opacity 60 (selection)</li>
                <li>Opacity 40 Screen (selection)</li>
                <li>Apply Default Style (selection)</li>
                <li>Save For Web GIF 64 Dithered</li>
                <li>Save For Web JPG Medium</li>
                <li>Save For Web PNG 24</li>
                <li>Simplify (selection)</li>
                <li>Simplify Straight (selection)</li>
                <li>Revert</li>
                <li class="flat">Delete Unused Panel Items</li>
                <li>Move Dialog (selection)</li>
                <li>Scale Dialog (selection)</li>
                <li>Rotate Dialog (selection)</li>
                <li>Rotate 90 CW (selection)</li>
                <li>Shear Dialog (selection)</li>
                <li>Reflect Horizontal</li>
                <li>Unite (selection)</li>
                <li>Intersect (selection)</li>
                <li>Exclude (selection)</li>
                <li>Minus Front (selection)</li>
                <li>Rasterize (selection)</li>
                <li class="flat">Select same Stroke color and Overprint</li>
                <li class="flat">Select same Fill and Overprint</li>
                <li class="flat">Fit to selected</li>
            </ul>
        </div>
        <div class="panel grow">
            <div class="tabs"><h2 class="tab on">Separations Preview</h2></div>
            <div class="body separations">
                <label class="check"><input type="checkbox">Overprint Preview</label>
                <div class="sep-list">
                    <table>
                        <tr><td><svg class="eye"><use href="#eye"/></svg></td><td><i class="ink cmyk"></i>CMYK</td></tr>
                        <tr><td><svg class="eye"><use href="#eye"/></svg></td><td><i class="ink cyan"></i>Cyan</td></tr>
                        <tr><td><svg class="eye"><use href="#eye"/></svg></td><td><i class="ink magenta"></i>Magenta</td></tr>
                        <tr><td><svg class="eye"><use href="#eye"/></svg></td><td><i class="ink yellow"></i>Yellow</td></tr>
                        <tr><td><svg class="eye"><use href="#eye"/></svg></td><td><i class="ink black"></i>Black</td></tr>
                    </table>
                </div>
                <label class="check off"><input type="checkbox" disabled>Show Used Spot Colors Only</label>
            </div>
        </div>
    </section>

    <section class="dock">
        <div class="dock-head"><svg class="dbl"><use href="#dbl-r"/></svg></div>
        <div class="panel">
            <div class="tabs"><h2 class="tab on"><svg class="ud"><use href="#updown"/></svg>Stroke</h2><svg class="burger"><use href="#burger"/></svg></div>
            <div class="body stroke-body">
                <div class="row"><label for="sw">Weight:</label><span class="spin w88"><svg class="stepper"><use href="#step"/></svg><input id="sw" value="1 pt"><button aria-label="Weights"><svg class="i10"><use href="#chev"/></svg></button></span></div>
                <div class="row"><span class="lbl">Cap:</span><span class="seg"><button class="on" aria-label="Butt"><svg class="i13"><use href="#c-butt"/></svg></button><button aria-label="Round cap"><svg class="i13"><use href="#c-round"/></svg></button><button aria-label="Projecting"><svg class="i13"><use href="#c-proj"/></svg></button></span></div>
                <div class="row"><span class="lbl">Corner:</span><span class="seg"><button class="on" aria-label="Miter"><svg class="i13"><use href="#j-miter"/></svg></button><button aria-label="Round join"><svg class="i13"><use href="#j-round"/></svg></button><button aria-label="Bevel"><svg class="i13"><use href="#j-bevel"/></svg></button></span><label class="limit" for="lim">Limit:</label><span class="spin w39"><input id="lim" value="10"></span><span class="dim times">x</span></div>
                <div class="row"><span class="lbl">Align Stroke:</span><span class="seg"><button class="on" aria-label="Center"><svg class="i13"><use href="#a-mid"/></svg></button><button aria-label="Inside"><svg class="i13"><use href="#a-in"/></svg></button><button aria-label="Outside"><svg class="i13"><use href="#a-out"/></svg></button></span></div>
                <hr>
                <div class="row"><label class="check"><input type="checkbox">Dashed Line</label><span class="seg wide push"><button aria-label="Preserve dashes"><svg><use href="#dash-a"/></svg></button><button aria-label="Align dashes"><svg><use href="#dash-b"/></svg></button></span></div>
                <div class="dashes off">
                    <label><input value="0 pt" disabled>dash</label><label><input value="0 pt" disabled>gap</label><label><input value="0 pt" disabled>dash</label><label><input value="0 pt" disabled>gap</label><label><input value="0 pt" disabled>dash</label><label><input value="0 pt" disabled>gap</label>
                </div>
                <hr>
                <div class="row"><span class="lbl">Arrowheads:</span><button class="pick arrow" aria-label="Start arrowhead"><i class="rule"></i><svg class="i10"><use href="#chev"/></svg></button><button class="pick arrow" aria-label="End arrowhead"><i class="rule"></i><svg class="i10"><use href="#chev"/></svg></button><svg class="i14 push soft-icon"><use href="#arrows"/></svg></div>
                <div class="row scale off"><label for="sc1">Scale:</label><span class="spin w57"><svg class="stepper"><use href="#step"/></svg><input id="sc1" value="100%" disabled></span><span class="spin w57"><svg class="stepper"><use href="#step"/></svg><input aria-label="End scale" value="100%" disabled></span><svg class="i16 push soft-icon"><use href="#unlink"/></svg></div>
                <div class="row align off"><span class="lbl">Align:</span><span class="seg"><button aria-label="Extend arrow tip" disabled><svg class="i13"><use href="#al-a"/></svg></button><button aria-label="Place arrow tip" disabled><svg class="i13"><use href="#al-b"/></svg></button></span></div>
                <hr>
                <div class="row"><span class="lbl">Profile:</span><button class="pick profile"><i class="rule"></i><b>Uniform</b><svg class="i10"><use href="#chev"/></svg></button><svg class="i14 push off"><use href="#flip-h"/></svg><svg class="i14 off flipv"><use href="#flip-v"/></svg></div>
            </div>
        </div>
        <div class="panel">
            <div class="tabs"><h2 class="tab on"><svg class="ud"><use href="#updown"/></svg>Gradient</h2><svg class="burger"><use href="#burger"/></svg></div>
            <div class="body gradient-body">
                <div class="grad-side">
                    <div class="grad-thumb"></div>
                    <div class="fillstroke"><span class="stroke-box"></span><span class="fill-box"></span></div>
                    <svg class="rev off"><use href="#rev"/></svg>
                </div>
                <div class="grad-form">
                    <div class="row"><span class="lbl">Type:</span><span class="seg types"><button aria-label="Linear"><svg class="i16"><use href="#g-lin"/></svg></button><button aria-label="Radial"><svg class="i16"><use href="#g-rad"/></svg></button><button aria-label="Freeform"><svg class="i16"><use href="#g-free"/></svg></button></span></div>
                    <div class="row off"><span class="lbl">Stroke:</span><span class="seg"><button aria-label="Within stroke" disabled><svg class="i13"><use href="#j-miter"/></svg></button><button aria-label="Along stroke" disabled><svg class="i13"><use href="#j-bevel"/></svg></button><button aria-label="Across stroke" disabled><svg class="i13"><use href="#j-round"/></svg></button></span></div>
                    <div class="row off"><span class="lbl"><svg class="i14 mid"><use href="#angle"/></svg></span><span class="select w70"><select aria-label="Angle" disabled><option></option></select></span></div>
                    <div class="row off"><span class="lbl"><svg class="i16 mid"><use href="#aspect"/></svg></span><span class="select w70"><select aria-label="Aspect ratio" disabled><option></option></select></span></div>
                    <div class="row off"><label for="meth"><i class="blue-dot"></i>Method:</label><span class="select w120"><select id="meth" disabled><option></option></select></span></div>
                    <label class="check off dither"><input type="checkbox" disabled>Dither</label>
                </div>
                <div class="grad-bar"><i></i><svg class="i12 off"><use href="#trash"/></svg></div>
                <svg class="grad-pick off"><use href="#pick"/></svg>
                <div class="grad-form stops off">
                    <div class="row"><label for="gop">Opacity:</label><span class="select w70"><select id="gop" disabled><option></option></select></span></div>
                    <div class="row"><label for="gloc">Location:</label><span class="select w70"><select id="gloc" disabled><option></option></select></span></div>
                </div>
            </div>
        </div>
        <div class="panel">
            <div class="tabs"><h2 class="tab on"><svg class="ud"><use href="#updown"/></svg>Transparency</h2><svg class="burger"><use href="#burger"/></svg></div>
            <div class="body transparency-body">
                <div class="row"><span class="select framed w93"><select aria-label="Blend mode"><option>Normal</option></select></span><label class="op" for="top">Opacity:</label><span class="spin w69"><input id="top" value="100%"><button aria-label="Opacity slider"><svg class="i10"><use href="#chev-r"/></svg></button></span></div>
                <hr>
                <div class="mask off">
                    <div class="mask-thumb"></div>
                    <div class="mask-side"><button class="flatbtn" disabled>Make Mask</button><label class="check"><input type="checkbox" disabled>Clip</label><label class="check"><input type="checkbox" disabled>Invert Mask</label></div>
                </div>
                <hr>
                <div class="checks"><label class="check"><input type="checkbox">Isolate Blending</label><label class="check"><input type="checkbox">Knockout Group</label></div>
                <div class="checks"><label class="check"><input type="checkbox">Opacity &amp; Mask Define Knockout Shape</label></div>
            </div>
        </div>
        <div class="panel grow">
            <div class="tabs"><h2 class="tab on">Appearance</h2><svg class="burger"><use href="#burger"/></svg></div>
            <div class="body list-body">
                <div class="framed-list appearance">
                    <div class="ap-row top"><i class="ap-swatch plain-sw"></i><strong>No Selection</strong></div>
                    <div class="ap-row"><svg class="eye"><use href="#eye"/></svg><svg class="i10"><use href="#chev-r"/></svg><span class="dotted">Stroke:</span><i class="ap-swatch st"></i><span>1 pt</span></div>
                    <div class="ap-row"><svg class="eye"><use href="#eye"/></svg><svg class="i10"><use href="#chev-r"/></svg><span class="name">Fill:</span><i class="ap-swatch"></i></div>
                    <div class="ap-row"><svg class="eye faint"><use href="#eye"/></svg><span class="i10"></span><span class="dotted dim">Opacity:</span><span>Default</span></div>
                </div>
                <div class="foot ap-foot"><svg class="i12"><use href="#box"/></svg><svg class="i12"><use href="#boxin"/></svg><em>fx.</em><svg class="i12 push"><use href="#nope"/></svg><svg class="i12 off"><use href="#plus"/></svg><svg class="i12 off"><use href="#trash"/></svg></div>
            </div>
        </div>
    </section>

    <section class="dock last">
        <div class="dock-head"><svg class="dbl"><use href="#dbl-r"/></svg></div>
        <div class="panel">
            <div class="tabs"><h2 class="tab on"><svg class="ud"><use href="#updown"/></svg>Color</h2><h2 class="tab">Color Guide</h2><svg class="burger"><use href="#burger"/></svg></div>
            <div class="body color-body">
                <p class="dim">Recent Colors</p>
                <div class="recent" id="recent"></div>
                <hr>
                <div class="color-mix">
                    <div class="mix-side"><div class="mix-icons"><svg class="i12"><use href="#deflt"/></svg><svg class="i12"><use href="#swap"/></svg></div><div class="fillstroke"><span class="stroke-box"></span><span class="fill-box"></span></div></div>
                    <label class="dim" for="k">K</label>
                    <input class="k-slider" type="range" aria-label="K amount" value="0">
                    <span class="spin w35"><input id="k" value="0"></span><span class="dim pct">%</span>
                </div>
                <div class="trio"><i class="m-none"></i><i class="m-black"></i><i class="m-white"></i></div>
                <div class="spectrum"></div>
            </div>
        </div>
        <div class="panel">
            <div class="tabs"><h2 class="tab on">Swatches</h2><svg class="burger"><use href="#burger"/></svg></div>
            <div class="body swatches-body">
                <div class="swatch-head"><div class="fillstroke"><span class="stroke-box"></span><span class="fill-box"></span></div><button class="five" aria-label="Color groups"><svg class="i14"><use href="#five"/></svg></button><span class="seg view push"><button aria-label="List view"><svg class="i12"><use href="#rows"/></svg></button><button aria-label="Grid view"><svg class="i14"><use href="#grid"/></svg></button></span></div>
                <div class="swatch-list" id="swatches"></div>
                <div class="foot sw-foot"><svg class="i16"><use href="#lib"/></svg><svg class="i14 off"><use href="#addlib"/></svg><svg class="i16 push"><use href="#kinds"/></svg><svg class="i12 off"><use href="#opts"/></svg><svg class="i14"><use href="#folder"/></svg><svg class="i12"><use href="#plus"/></svg><svg class="i12 off"><use href="#trash"/></svg></div>
            </div>
        </div>
        <div class="panel grow">
            <div class="tabs"><h2 class="tab on">Layers</h2><h2 class="tab">Artboards</h2><h2 class="tab">Links</h2><svg class="burger"><use href="#burger"/></svg></div>
            <div class="body list-body">
                <div class="framed-list">
                    <div class="search"><label class="search-box"><svg class="i14"><use href="#t-zoom"/></svg><input type="text" placeholder="Search All" aria-label="Search layers"></label><svg class="i14"><use href="#funnel"/></svg></div>
                    <div class="layer"><svg class="eye"><use href="#eye"/></svg><i class="bar"></i><i class="thumb"></i><span>Layer 1</span><i class="target"></i></div>
                </div>
                <div class="foot ly-foot"><span>1 La...</span><svg class="i13"><use href="#mkart"/></svg><svg class="i12 off"><use href="#export"/></svg><svg class="i13 off"><use href="#t-zoom"/></svg><svg class="i12 off"><use href="#mask"/></svg><svg class="i15"><use href="#sublayer"/></svg><svg class="i12"><use href="#plus"/></svg><svg class="i12 off"><use href="#trash"/></svg></div>
            </div>
        </div>
    </section>
</div>

<footer class="taskbar">
    <i class="tb win"></i><i class="tb note"></i><i class="tb indd"></i><i class="tb orange"></i><i class="tb blue"></i>
    <div class="tb-active"><i class="tb ai"></i></div><i class="tb white"></i>
    <i class="tb tray"></i><time>3:34 PM</time>
</footer>

<!-- floating panels -->
<div class="float f-shapes">
    <div class="inner">
        <div class="float-head"><svg class="dbl"><use href="#dbl-l"/></svg><svg class="x"><use href="#x"/></svg></div>
        <div class="grip"></div>
        <div class="shape-row"><svg><use href="#s-rect"/></svg><svg><use href="#s-round"/></svg><svg><use href="#s-ell"/></svg><svg><use href="#s-hex"/></svg><svg><use href="#s-star"/></svg><svg><use href="#s-flare"/></svg></div>
    </div>
</div>

<div class="float f-attr">
    <div class="inner">
        <div class="float-head"><svg class="dbl"><use href="#dbl-r"/></svg><svg class="x"><use href="#x"/></svg></div>
        <div class="grip"></div>
        <div class="attr-row"><svg class="i16"><use href="#attr"/></svg>Attributes</div>
    </div>
</div>

<div class="float f-trace">
    <div class="inner">
        <div class="float-head"><svg class="dbl"><use href="#dbl-l"/></svg><svg class="x"><use href="#x"/></svg></div>
        <div class="tabs"><h2 class="tab on">Image Trace</h2></div>
        <div class="trace-body">
            <div class="trace-icons off"><svg><use href="#i-auto"/></svg><svg><use href="#i-cam"/></svg><svg><use href="#i-low"/></svg><svg><use href="#i-gray"/></svg><svg><use href="#i-bw"/></svg><svg><use href="#i-out"/></svg></div>
            <hr>
            <div class="trow off top"><label for="tp">Preset:</label><span class="select"><select id="tp" disabled><option>[Default]</option></select></span><svg class="i13"><use href="#list"/></svg></div>
            <div class="trow off"><label for="tv">View:</label><span class="select"><select id="tv" disabled><option>Tracing Result</option></select></span><svg class="i13"><use href="#eye"/></svg></div>
            <div class="trow off"><label for="tm">Mode:</label><span class="select"><select id="tm" disabled><option>Black and White</option></select></span></div>
            <div class="trow off tight"><label for="tl">Palette:</label><span class="select"><select id="tl" disabled><option>Limited</option></select></span></div>
            <div class="trow off tight"><label for="tt">Threshold:</label><input id="tt" class="t-slider" type="range" value="50" disabled><input class="t-num" aria-label="Threshold value" value="128" disabled></div>
            <div class="less-more off"><span>Less</span><span>More</span></div>
            <button class="advanced"><svg><use href="#tri-r"/></svg>Advanced<i></i></button>
            <hr>
            <div class="t-info off"><span>Info:</span><span><svg class="i12"><use href="#i-path"/></svg>0</span><span><svg class="i12"><use href="#i-anch"/></svg>0</span><span><svg class="i12"><use href="#i-cols"/></svg>0</span></div>
            <hr>
            <div class="t-act"><label class="check"><input type="checkbox">Auto Grouping</label><button class="flatbtn" disabled>Expand</button></div>
            <hr>
            <div class="t-act"><label class="check off"><input type="checkbox" disabled>Preview</label><button class="flatbtn" disabled>Trace</button></div>
            <hr>
            <div class="t-foot"><svg class="i13"><use href="#info"/></svg><svg class="i12"><use href="#i-chat"/></svg></div>
        </div>
        <div class="t-grip"><div class="grip"></div></div>
    </div>
</div>

<div class="float f-char">
    <div class="inner">
        <div class="float-head"><svg class="dbl"><use href="#dbl-l"/></svg><svg class="x"><use href="#x"/></svg></div>
        <div class="tabs"><h2 class="tab on"><svg class="ud"><use href="#updown"/></svg>Character</h2><h2 class="tab">Paragraph</h2><svg class="burger"><use href="#burger"/></svg></div>
        <div class="char-body">
            <span class="select framed cut-arrow"><select aria-label="Font"><option>Myriad Pro</option></select></span>
            <span class="select framed cut-arrow"><select aria-label="Style"><option>Regular</option></select></span>
            <hr>
            <div class="char-grid">
                <label for="c1" class="g"><small>T</small><b>T</b></label><span class="spin"><svg class="stepper"><use href="#step"/></svg><input id="c1" value="12 pt"><button aria-label="Sizes"><svg class="i10"><use href="#chev"/></svg></button></span>
                <label for="c2" class="g stack"><span class="tall">↕</span><span><u>A</u><br>A</span></label><span class="spin"><svg class="stepper"><use href="#step"/></svg><input id="c2" value="(14.4 pt)"><button aria-label="Leading"><svg class="i10"><use href="#chev"/></svg></button></span>
                <label for="c3" class="g sans">V/A</label><span class="spin"><svg class="stepper"><use href="#step"/></svg><input id="c3" value="Auto"><button aria-label="Kerning"><svg class="i10"><use href="#chev"/></svg></button></span>
                <label for="c4" class="g sans inv"><span>VA</span></label><span class="spin"><svg class="stepper"><use href="#step"/></svg><input id="c4" value="0"><button aria-label="Tracking"><svg class="i10"><use href="#chev"/></svg></button></span>
            </div>
            <hr>
            <div class="char-grid">
                <label for="c5" class="g"><small class="tall">↕</small><b>T</b></label><span class="spin"><svg class="stepper"><use href="#step"/></svg><input id="c5" value="100%"><button aria-label="Vertical scale"><svg class="i10"><use href="#chev"/></svg></button></span>
                <label for="c6" class="g"><b class="under">T</b></label><span class="spin"><svg class="stepper"><use href="#step"/></svg><input id="c6" value="100%"><button aria-label="Horizontal scale"><svg class="i10"><use href="#chev"/></svg></button></span>
                <label for="c7" class="g sans"><u>A</u><sup>a</sup></label><span class="spin"><svg class="stepper"><use href="#step"/></svg><input id="c7" value="0 pt"><button aria-label="Baseline shift"><svg class="i10"><use href="#chev"/></svg></button></span>
                <label for="c8" class="g"><span class="ring">T</span></label><span class="spin"><svg class="stepper"><use href="#step"/></svg><input id="c8" value="0°"><button aria-label="Rotation"><svg class="i10"><use href="#chev"/></svg></button></span>
            </div>
            <hr>
            <div class="char-styles"><button>TT</button><button>T<small>T</small></button><button class="sup">T<sup>1</sup></button><button>T<sub>1</sub></button><button class="und"><u>T</u></button><button><s>T</s></button></div>
            <hr>
            <div class="char-lang"><span class="select framed"><select aria-label="Language"><option>English: USA</option></select></span><span class="aa">a<b>a</b></span><span class="select framed"><select aria-label="Anti-aliasing"><option>Sharp</option></select></span></div>
            <hr>
            <div class="snap-head"><span class="snap-title">Snap to Glyph</span><span class="ag"><b>A</b>g</span><svg class="i14"><use href="#info"/></svg></div>
            <div class="snap-row"><button><u>Ax</u></button><button><s>Ax</s></button><button><span class="frame">Ag</span></button><button class="bare"><s>Ag</s></button><i></i><button>A\</button><button class="dotA">A</button></div>
        </div>
    </div>
</div>

<div class="float f-path">
    <div class="inner">
        <div class="float-head"><svg class="dbl"><use href="#dbl-l"/></svg><svg class="x"><use href="#x"/></svg></div>
        <div class="tabs"><h2 class="tab">Align</h2><h2 class="tab on">Pathfinder</h2><h2 class="tab">Transform</h2><svg class="burger"><use href="#burger"/></svg></div>
        <div class="path-body">
            <p>Shape Modes:</p>
            <div class="path-row modes4"><svg><use href="#p-unite"/></svg><svg><use href="#p-minus"/></svg><svg><use href="#p-inter"/></svg><svg><use href="#p-excl"/></svg><button class="flatbtn" disabled>Expand</button></div>
            <p>Pathfinders:</p>
            <div class="path-row"><svg><use href="#p-divide"/></svg><svg><use href="#p-trim"/></svg><svg><use href="#p-merge"/></svg><svg><use href="#p-crop"/></svg><svg><use href="#p-outline"/></svg><svg><use href="#p-back"/></svg></div>
        </div>
    </div>
</div>

<script src="script.js"></script>
</body>
</html>
```

FILE: styles.css
```css
:root {
    --panel: #aeaeae;
    --bar: #a9a9a9;
    --edge: #a5a5a5;
    --frame: #b5b5b5;
    --field: #a8a8a8;
    --text: #f8f8f8;
    --dim: #dedede;
    --off: #bdbdbd;
    --icon: #e2e2e2;
}
* { box-sizing: border-box; }
body {
    margin: 0;
    height: 100vh;
    display: flex;
    flex-direction: column;
    overflow: hidden;
    position: relative;
    background: #b0b0b0;
    color: var(--text);
    font: 10px/14px "Open Sans", "Noto Sans", sans-serif;
}
button, input, select {
    font: inherit;
    color: inherit;
    background: none;
    border: 0;
    padding: 0;
    margin: 0;
    border-radius: 0;
    min-width: 0;
    appearance: none;
    opacity: 1;
}
h1, h2, p, ul { margin: 0; padding: 0; font-size: inherit; font-weight: normal; list-style: none; }
hr { width: 100%; height: 2px; margin: 0; border: 0; background: var(--edge); flex: none; }
svg { fill: currentColor; flex: none; display: block; }
em { font-style: italic; }

.sprite { position: absolute; width: 0; height: 0; }
.ln { fill: none; stroke: currentColor; stroke-width: 1; }
.w15 { stroke-width: 1.5; }
.w2 { stroke-width: 2; }
.w3 { stroke-width: 3; }
.dots { stroke-dasharray: 1.5 1.5; }
.soft { fill: currentColor; fill-opacity: .25; }
.cut, .bgfill { fill: var(--panel); }
.cutln { stroke: var(--panel); }
.white { fill: #fff; }
.shape { fill: #505050; stroke: #b4b4b4; }

.i10 { width: 10px; height: 10px; }
.i12 { width: 12px; height: 12px; }
.i13 { width: 13px; height: 13px; }
.i14 { width: 14px; height: 14px; }
.i15 { width: 15px; height: 12px; }
.i16 { width: 16px; height: 16px; }
.dbl { width: 8px; height: 6px; }
.x { width: 6px; height: 6px; }
.eye { width: 14px; height: 10px; }
.ud { width: 6px; height: 10px; color: var(--dim); }
.burger { width: 10px; height: 8px; margin-left: auto; color: var(--dim); }
.dim { color: var(--dim); }
.off { color: var(--off); }
.push { margin-left: auto; }
.dotted { border-bottom: 1px dotted; line-height: 12px; }

/* title bar */
.titlebar { flex: none; height: 23px; display: flex; align-items: center; background: #4c555a; color: #fff; }
.app-icon {
    width: 15px; height: 15px; margin: 0 6px 0 3px; border-radius: 3px;
    background: #300; color: #ff9a00; font-weight: 700; text-align: center; line-height: 14px;
}
.title { font-size: 12px; line-height: 20px; }
.window-buttons { margin-left: auto; display: flex; align-self: flex-start; padding-right: 2px; }
.window-buttons button { width: 45px; height: 21px; display: flex; align-items: center; justify-content: center; }
.min { width: 10px; height: 1px; background: #fff; }
.restore { width: 8px; height: 8px; border: 1px solid #6c7478; box-shadow: 1px -1px 0 #6c7478; }
.close { background: #c42b1c; }
.menu-strip { flex: none; height: 8px; background: #b0b0b0; border-bottom: 1px solid var(--edge); }
.share { display: block; width: 42px; height: 4px; margin-left: auto; margin-right: 248px; border: 1px solid #f4f4f4; border-top: 0; border-radius: 0 0 4px 4px; }

/* control bar */
.control-bar { flex: none; height: 33px; display: flex; align-items: center; padding-left: 15px; background: var(--panel); border-bottom: 1px solid var(--edge); }
.no-selection { width: 91px; height: 24px; line-height: 24px; border-right: 1px solid var(--edge); color: #d6d6d6; margin-right: 6px; }
.pick { display: flex; align-items: center; height: 21px; border: 1px solid var(--frame); background: var(--field); color: var(--icon); }
.pick > svg { margin: 0 4px; color: var(--text); }
.pick > i { width: 20px; align-self: stretch; background: #fff; }
.pick-white { margin-right: 5px; }
.pick-stroke > i { border: 1px solid #fff; background: var(--field); display: flex; }
.pick-stroke > i::after { content: ""; width: 8px; height: 8px; margin: auto; border: 2px solid #fff; }
.control-bar .pick-stroke { margin-right: 8px; }
.spin { display: flex; align-items: stretch; height: 21px; border: 1px solid var(--frame); border-radius: 2px; background: var(--field); }
.spin input { flex: 1; width: 20px; padding-left: 4px; }
.spin button { width: 18px; border-left: 1px solid var(--frame); display: flex; align-items: center; justify-content: center; }
.stepper { width: 18px; height: 15px; align-self: center; padding: 0 4px; }
.stepper + input { border-left: 1px solid var(--frame); }
.cb-weight { width: 82px; margin: 0 6px 0 5px; }
.brush { margin-right: 5px; }
.brush > i, .brush > b, .profile > i, .profile > b { background: #f3f3f3; align-self: stretch; }
.brush > b, .profile > b { font-weight: normal; color: #8a8a8a; line-height: 20px; padding: 0 3px; }
.pick .rule { width: 45px; background: linear-gradient(#999, #999) 6px 8px / 100% 3px no-repeat #f3f3f3; }
.brush.round { margin-right: 6px; }
.pick .dot { width: 18px; background: radial-gradient(circle at 10px 9px, #888 0 3px, #f3f3f3 3px); }
.round > b { padding: 0 7px 0 4px; }
.cb-opacity { width: 69px; margin: 0 6px 0 5px; }
.cb-opacity button { width: 22px; }
.style-pick { margin: 0 5px; }
.outline { height: 20px; border: 1px solid #bdbdbd; border-radius: 2px; padding: 0 7px; }
.doc-setup { margin-left: 6px; box-shadow: -6px 0 0 -5px var(--edge); }
.prefs { margin: 0 9px 0 5px; }
.plain { display: flex; align-items: center; gap: 5px; color: var(--icon); }
.gen { margin-left: 24px; }
.control-right { margin-left: auto; display: flex; align-items: center; gap: 13px; padding-right: 18px; color: var(--icon); }
.control-right span { display: flex; align-items: center; margin-right: 7px; }
.control-right .off { color: var(--off); }

/* workspace */
.workspace { flex: 1; min-height: 0; display: flex; border-bottom: 1px solid #777; }
.dock-head { flex: none; height: 12px; display: flex; align-items: center; justify-content: flex-end; padding-right: 5px; background: var(--bar); color: var(--icon); }
.dock-head.left { justify-content: flex-start; padding-left: 6px; align-self: stretch; }
.grip { flex: none; width: 20px; height: 4px; margin: 0 auto; background: repeating-linear-gradient(90deg, var(--edge) 0 1px, transparent 1px 2px); }

.toolbar { flex: none; width: 72px; display: flex; flex-direction: column; align-items: flex-start; background: var(--panel); border-right: 2px solid var(--edge); color: var(--icon); }
.toolbar .grip { margin: 4px 25px 12px; }
.tools { display: grid; grid-template-columns: 28px 28px; column-gap: 2px; padding: 0 7px 2px; border-bottom: 1px solid var(--edge); }
.tools button { height: 24px; position: relative; padding: 2px 4px; }
.tools svg { width: 20px; height: 20px; }
.tools .active { background: #a3a3a3; border-radius: 3px; }
.tools .more::after { content: ""; position: absolute; right: -1px; bottom: 2px; border: 2px solid; border-top-color: transparent; border-left-color: transparent; }
.fillstroke { position: relative; width: 30px; height: 30px; }
.fill-box, .stroke-box { position: absolute; border: 1px solid #999; }
.fill-box { left: 0; top: 0; width: 20px; height: 20px; background: #fff; }
.stroke-box { left: 11px; top: 11px; width: 19px; height: 19px; border-color: #fff; }
.stroke-box::after { content: ""; position: absolute; inset: 3px; border: 1px solid #fff; }
.big { width: 58px; height: 52px; margin: 5px 7px 8px; }
.big .fill-box { width: 35px; height: 34px; }
.big .stroke-box { left: 18px; top: 18px; width: 35px; height: 34px; }
.big .stroke-box::after { inset: 7px; }
.fs-swap { position: absolute; right: 3px; top: 0; }
.fs-default { position: absolute; left: -1px; bottom: 0; }
.modes { display: flex; width: 58px; height: 20px; margin: 0 7px 5px; border: 1px solid var(--frame); border-radius: 2px; }
.modes button { flex: 1; display: flex; align-items: center; justify-content: center; border-left: 1px solid var(--frame); }
.modes .on { background: #a3a3a3; border-left: 0; }
.modes i { width: 13px; height: 13px; border: 1px solid #999; }
.modes svg { width: 12px; height: 10px; }
.m-white { background: #fff; }
.m-black { background: #a2a2a2; }
.m-grad { background: linear-gradient(90deg, #fff, #aaa); }
.m-none { background: linear-gradient(to bottom right, #fff 43%, #ff9d9d 43% 57%, #fff 57%); }
.screen-mode { margin: 2px 0 22px 25px; }
.screen-mode svg { width: 24px; height: 16px; }
.edit-tools { display: flex; gap: 3px; margin-left: 29px; }
.edit-tools i { width: 3px; height: 3px; border-radius: 50%; background: var(--icon); }
.spark { width: 58px; height: 28px; margin: 13px 7px 0; display: flex; align-items: center; justify-content: center; background: #a3c6f4; border-radius: 2px; color: #fff; }
.spark svg { width: 18px; height: 16px; }

/* document */
.document { flex: 1; min-width: 0; display: flex; flex-direction: column; }
.doc-tabs { flex: none; height: 30px; background: var(--bar); display: flex; padding-left: 2px; }
.doc-tab { display: flex; align-items: center; gap: 17px; padding: 0 7px 0 9px; background: #b0b0b0; font-weight: 600; font-size: 11px; }
.doc-view { flex: 1; min-height: 0; display: flex; }
.canvas { flex: 1; display: flex; flex-direction: column; padding-left: 313px; background: #b0b0b0; }
.artboard-name { height: 25px; font-size: 12px; line-height: 20px; }
.artboard { flex: 1; width: 892px; position: relative; background: #fff; border: 1px solid #989898; border-bottom: 0; }
.artboard::before { content: ""; position: absolute; left: -3px; bottom: 0; width: 2px; height: 325px; background: #fff; }
.vscroll { width: 16px; background: var(--bar); display: flex; flex-direction: column; align-items: center; justify-content: space-between; padding: 627px 0 3px; color: var(--dim); }
.vscroll .thumb { width: 14px; height: 25px; border-radius: 4px; background: #b5b5b5; }
.status { flex: none; height: 17px; display: flex; align-items: center; gap: 5px; padding: 2px 0 0 5px; background: var(--bar); }
.stat-field { display: flex; align-items: center; width: 69px; height: 15px; border: 1px solid var(--frame); border-bottom: 0; }
.stat-field input { flex: 1; width: 20px; padding-left: 3px; }
.stat-field svg { margin: 0 4px; }
.short { width: 59px; margin-left: 1px; }
.nav { width: 12px; height: 9px; color: #fff; }
.nav.off { color: #c4c4c4; }
.stat-text { width: 198px; text-align: center; background: #adadad; color: var(--dim); line-height: 15px; }
.hscroll { flex: 1; display: flex; align-items: center; justify-content: space-between; padding: 0 19px 0 2px; color: var(--dim); }
.hscroll .thumb { width: 24px; height: 12px; border-radius: 4px; background: #b5b5b5; }

/* docks */
.dock { flex: none; width: 235px; display: flex; flex-direction: column; border-left: 1px solid var(--edge); border-right: 2px solid var(--edge); gap: 3px; background: var(--edge); }
.dock.first { border-left-width: 3px; }
.dock.last { width: 239px; border-right-width: 1px; }
.dock > .dock-head { margin-bottom: -3px; }
.panel { background: var(--panel); display: flex; flex-direction: column; }
.grow { flex: 1; min-height: 0; }
.tabs { flex: none; height: 27px; display: flex; align-items: center; padding-right: 7px; background: var(--bar); }
.tab { align-self: stretch; display: flex; align-items: center; padding: 0 8px; color: var(--dim); font-weight: 600; border-right: 1px solid var(--edge); }
.tab.on { background: var(--panel); color: #fff; }
.tab .ud { margin: 0 4px 0 -4px; }
.body { padding: 0 5px 0 5px; display: flex; flex-direction: column; }
.check { display: flex; align-items: center; gap: 5px; font-weight: 500; }
.check input { width: 12px; height: 12px; border: 1px solid var(--icon); border-radius: 1px; }
.check.off input, .off .check input { border-color: var(--off); }

.actions { height: 657px; }
.action-list { padding: 8px 20px 0 5px; }
.action-list li { height: 20px; margin-bottom: 1px; padding-left: 3px; line-height: 20px; background: #bababa; font-weight: 500; }
.action-list .flat { background: none; }
.separations { flex: 1; padding-top: 7px; }
.separations > .check { height: 12px; padding-left: 1px; }
.sep-list { flex: 1; margin: 7px 0 6px; border: 1px solid var(--frame); border-radius: 2px; }
.sep-list table { width: 100%; border-collapse: collapse; color: var(--off); }
.sep-list tr { height: 21px; border-bottom: 1px solid var(--frame); }
.sep-list td { padding: 0 0 0 4px; }
.sep-list td:first-child { width: 20px; padding: 0 3px; border-right: 1px solid var(--frame); color: #cfcfcf; }
.ink { display: inline-block; width: 11px; height: 11px; margin-right: 4px; border: 1px solid #999; vertical-align: -2px; }
.cmyk { background: conic-gradient(from -45deg, #cfa3d6 90deg, #d8d79a 90deg 180deg, #999 180deg 270deg, #a0d4cf 270deg); }
.cyan { background: #9bdff9; }
.magenta { background: #fbaad1; }
.yellow { background: #fff6b0; }
.black { background: #a6a6a6; }
.separations > .check:last-child { margin-bottom: 8px; }

.row { display: flex; align-items: center; min-height: 21px; }
.row > label, .row > .lbl { width: 56px; margin-right: 4px; text-align: right; color: var(--dim); flex: none; white-space: nowrap; }
.row > .check { width: auto; color: var(--text); }
.row.off > label, .row.off > .lbl, .off .row > label { color: var(--off); }
.stroke-body { padding-top: 7px; padding-bottom: 7px; gap: 5px; }
.w88 { width: 88px; }
.w39 { width: 39px; }
.w57 { width: 57px; }
.w69 { width: 69px; }
.w35 { width: 35px; height: 20px; }
.seg { display: inline-flex; height: 22px; border: 1px solid var(--frame); color: var(--icon); }
.off .seg, .seg.off { color: var(--off); }
.seg button { width: 22px; display: flex; align-items: center; justify-content: center; border-left: 1px solid var(--frame); }
.seg button:first-child { border-left: 0; }
.seg .on { background: #a0a0a0; color: #fff; }
.row > .limit { width: auto; margin: 0 4px 0 18px; }
.times { margin-left: 4px; }
.wide { color: #c4c4c4; }
.wide button { width: 38px; }
.wide svg { width: 30px; height: 14px; }
.dashes { display: flex; justify-content: space-between; }
.dashes label { width: 34px; text-align: center; line-height: 17px; }
.dashes input { width: 100%; height: 21px; padding-left: 4px; background: #b1b1b1; display: block; }
.arrow { margin-right: 6px; }
.arrow > i.rule { width: 37px; background: linear-gradient(#999, #999) 50% 8px / 27px 3px no-repeat #f3f3f3; }
.soft-icon { color: #c2c2c2; }
.push.soft-icon { margin-right: 5px; }
.scale { margin-top: 4px; }
.scale .spin { margin-right: 6px; background: #b1b1b1; }
.align { margin-top: 4px; }
.flipv { margin: 0 6px 0 9px; }

.select { position: relative; display: flex; height: 21px; background: #b1b1b1; }
.select select { flex: 1; width: 100%; padding: 0 16px 0 6px; opacity: 1; }
.select::after { content: ""; position: absolute; right: 7px; top: 5px; width: 6px; height: 6px; border: solid; border-width: 0 1px 1px 0; transform: rotate(45deg); pointer-events: none; }
.framed { border: 1px solid var(--frame); border-radius: 2px; background: var(--field); }
.w70 { width: 70px; }
.w93 { width: 93px; }
.w120 { width: 120px; }
.gradient-body { display: grid; grid-template-columns: 46px 1fr; padding-top: 6px; padding-bottom: 5px; }
.grad-side { display: flex; flex-direction: column; gap: 5px; position: relative; }
.grad-side::after { content: ""; position: absolute; left: 35px; top: 14px; border: 3px solid transparent; border-top-color: var(--icon); }
.grad-thumb { width: 32px; height: 32px; border: 1px solid #999; background: linear-gradient(90deg, #fff, #d6d9d9 50%, #a8a8a8); }
.rev { width: 16px; height: 14px; margin: 6px 0 0 5px; }
.grad-form { display: flex; flex-direction: column; gap: 5px; }
.grad-form .row > label, .grad-form .row > .lbl { width: 46px; display: flex; justify-content: flex-end; align-items: center; }
.types { height: 24px; }
.types button { width: 25px; }
.blue-dot { width: 6px; height: 6px; margin-right: 5px; border-radius: 50%; background: #9cc4f5; flex: none; }
.mid { color: #cacaca; }
.dither { margin-left: 51px; height: 13px; }
.grad-bar { grid-column: 1 / 3; display: flex; align-items: center; gap: 14px; padding: 0 10px; margin: 22px 0 19px; }
.grad-bar i { flex: 1; height: 16px; border: 1px solid #a0a0a0; background: linear-gradient(90deg, #fff, #d6d9dc 45%, #a6a6a6); }
.grad-pick { width: 20px; height: 16px; margin: 16px 0 0 5px; }

.transparency-body { padding-top: 7px; padding-bottom: 5px; gap: 5px; }
.row > .op { width: auto; margin: 0 4px 0 6px; }
.w69 button { width: 18px; }
.mask { display: flex; gap: 4px; }
.mask-thumb { flex: 1; margin-top: 1px; border: 1px solid var(--edge); }
.mask-side { width: 82px; display: flex; flex-direction: column; gap: 6px; }
.flatbtn { height: 20px; width: 78px; background: #b1b1b1; color: var(--off); }
.checks { display: flex; gap: 6px; height: 15px; padding-left: 1px; }

.list-body { flex: 1; padding-top: 6px; min-height: 0; }
.framed-list { flex: 1; border: 1px solid var(--frame); border-radius: 2px; min-height: 0; }
.ap-row { display: flex; align-items: center; height: 25px; padding-left: 5px; border-bottom: 1px solid var(--frame); font-weight: 500; }
.ap-row.top { height: 26px; }
.ap-row .eye { color: var(--icon); margin-right: 10px; }
.ap-row .faint { color: var(--off); }
.ap-row .i10 { margin-right: 9px; }
.ap-row .dotted, .ap-row .name { min-width: 30px; margin-right: 6px; }
.ap-row .ap-swatch { width: 17px; height: 17px; margin: 0 15px 0 6px; border: 1px solid #8f8f8f; background: #fff; box-shadow: inset 0 0 0 1px #f4f4f4, inset 0 0 0 2px #8f8f8f; }
.ap-row .st { background: var(--panel); box-shadow: inset 0 0 0 1px #fff, inset 0 0 0 2px #8f8f8f, inset 0 0 0 3px #fff, inset 0 0 0 4px #8f8f8f; }
.ap-row .plain-sw { width: 19px; height: 19px; margin: 0 28px 0 -2px; box-shadow: none; }
.foot { flex: none; height: 20px; display: flex; align-items: center; color: var(--icon); }
.foot .off { color: var(--off); }
.ap-foot { gap: 14px; padding: 0 24px 0 6px; }
.ap-foot em { font-size: 12px; }

.color-body { padding-top: 8px; padding-bottom: 6px; padding-right: 4px; }
.recent { display: flex; gap: 1px; height: 16px; margin: 5px 0; border: 1px solid var(--frame); }
.recent i { width: 14px; }
.color-mix { display: flex; height: 114px; }
.mix-side { width: 48px; }
.mix-icons { display: flex; gap: 8px; color: var(--icon); height: 17px; }
.color-mix > label { width: 15px; padding-top: 5px; }
.k-slider { flex: 1; height: 18px; margin: 3px 7px 0 0; }
.k-slider::-webkit-slider-runnable-track { height: 4px; background: linear-gradient(90deg, #fff, #999); }
.k-slider::-webkit-slider-thumb { appearance: none; width: 9px; height: 8px; margin-top: 4px; background: var(--icon); clip-path: polygon(50% 0, 100% 45%, 100% 100%, 0 100%, 0 45%); }
.pct { margin: 5px 5px 0 3px; }
.color-mix .spin { margin-top: 2px; }
.trio { display: flex; width: 39px; height: 13px; border: 1px solid #a0a0a0; margin-bottom: 13px; }
.trio i { flex: 1; }
.spectrum { height: 166px; margin: 0 12px 0 1px; border: 1px solid #9f9f9f; background: linear-gradient(90deg, #fff, #e8eae9 25%, #dcdee2 38%, #d6d9d7 50%, #cacbce 62%, #b6b6b6 82%, #a6a6a6); }

.swatches-body { padding-top: 6px; padding-right: 4px; }
.swatch-head { display: flex; height: 35px; }
.five { width: 26px; height: 26px; margin-left: 5px; display: flex; align-items: center; justify-content: center; border: 1px solid var(--frame); border-radius: 2px; color: var(--icon); }
.view { height: 29px; }
.view button { width: 24px; }
.swatch-list { height: 372px; padding: 0; border: 1px solid var(--frame); }
.swatch-row { display: flex; gap: 1px; margin-bottom: 1px; height: 19px; }
.swatch-row.group { margin-top: 3px; }
.swatch-row i { width: 19px; height: 19px; }
.swatch-row svg { width: 16px; height: 12px; margin: 2px 2px 0 1px; color: var(--icon); }
.sw-reg { background: radial-gradient(circle at 9px 9px, #ccc 0 2px, transparent 2px 6px, #ccc 6px 7px, transparent 7px), linear-gradient(#ccc, #ccc) 9px 0 / 1px 100% no-repeat, linear-gradient(#ccc, #ccc) 0 9px / 100% 1px no-repeat, #f6f6f6; }
.sw-bw { background: linear-gradient(90deg, #fff, #a9a9a9); }
.sw-warm { background: linear-gradient(90deg, #fff0ae, #fdbfae); }
.sw-sky { background: linear-gradient(90deg, #a6cde8, #ecf1f4); }
.sw-ball { background: radial-gradient(#f6f6f6 0 45%, #a3a3a3 62%); }
.sw-leaf { background: radial-gradient(#b6dbb0 30%, transparent 32%), conic-gradient(from 45deg, #cfe5b6 90deg, #f7fbf0 90deg 180deg, #cfe5b6 180deg 270deg, #f7fbf0 270deg); }
.sw-vine { background: radial-gradient(circle, #e8dcd6 0 1px, transparent 2px) 0 0 / 5px 5px, #cfbcb3; }
.sw-foot { padding-left: 5px; }
.sw-foot svg { margin-right: 12px; }
.sw-foot svg:first-child { margin-right: 11px; }
.sw-foot svg.push { margin-right: 13px; }
.sw-foot svg:last-child { margin-right: 24px; }

.dock.last .list-body { padding-right: 4px; }
.search { display: flex; align-items: center; gap: 9px; padding: 3px 5px 7px; height: 36px; }
.search > svg, .search-box svg { color: var(--icon); }
.search-box { flex: 1; min-width: 0; display: flex; align-items: center; height: 24px; padding-left: 4px; border: 1px solid var(--frame); border-radius: 2px; background: var(--field); }
.search-box input { flex: 1; padding-left: 10px; font-size: 12px; }
.search-box input::placeholder { color: var(--off); opacity: 1; }
.layer { display: flex; align-items: center; height: 21px; padding: 0 20px 0 3px; background: #adb6c0; position: relative; font-weight: 500; }
.layer .eye { color: #d5d9de; }
.layer .bar { width: 3px; height: 17px; margin: 0 27px 0 26px; background: #b8cdfb; }
.layer .thumb { width: 16px; height: 16px; background: #fff; margin-right: 6px; margin-left: -1px; }
.layer .target { width: 8px; height: 8px; margin-left: auto; border: 1px solid var(--icon); border-radius: 50%; }
.layer::after { content: ""; position: absolute; right: 0; top: 0; border: 3px solid var(--icon); border-left-color: transparent; border-bottom-color: transparent; }
.ly-foot { gap: 12px; padding-right: 22px; color: var(--icon); }
.ly-foot span { margin-right: auto; white-space: nowrap; }

/* floating panels */
.float {
    --panel: #323232; --bar: #262626; --edge: #292929; --frame: #3f3f3f; --field: #232323;
    --text: #d6d6d6; --dim: #8d8d8d; --off: #555; --icon: #b4b4b4;
    position: absolute; background: #000; color: var(--text); padding: 2px 5px 7px;
}
.inner { background: var(--panel); border: 1px solid #222; border-radius: 4px 4px 0 0; overflow: hidden; }
.float-head { height: 12px; display: flex; align-items: center; justify-content: flex-end; gap: 12px; padding-right: 5px; background: var(--bar); color: #999; }
.float .tabs { border-top: 1px solid #1f1f1f; }
.float .tab { border-color: #1f1f1f; }
.float .grip { background: repeating-linear-gradient(90deg, #1a1a1a 0 1px, transparent 1px 2px); }
.float .flatbtn, .float .off .select { background: #393939; }
.float .check { color: #e4e4e4; }
.float .check.off { color: var(--off); }
.f-shapes { left: 68px; top: 91px; width: 270px; padding: 2px 5px 7px 80px; }
.f-shapes .grip, .f-attr .grip { margin-top: 4px; }
.shape-row { display: flex; gap: 12px; padding: 16px 0 5px 1px; color: var(--icon); }
.shape-row svg { width: 18px; height: 17px; }
.f-attr { left: 68px; top: 282px; width: 113px; }
.attr-row { display: flex; align-items: center; gap: 10px; padding: 9px 0 9px 11px; font-weight: 600; color: #e8e8e8; }
.attr-row svg { color: var(--icon); }

.f-trace { left: 1303px; top: 162px; width: 289px; }
.trace-body { padding: 18px 10px 0; }
.trace-icons { display: flex; justify-content: center; gap: 15px; padding: 0 0 11px; margin-right: 1px; }
.trace-icons svg { width: 14px; height: 14px; }
.trow { display: flex; align-items: center; height: 21px; margin-top: 7px; }
.trow.top { margin: 7px 0 8px; }
.trow.tight { margin-top: 5px; }
.trow label { width: 47px; margin-right: 4px; text-align: right; white-space: nowrap; }
.trow .select { width: 177px; margin-right: 10px; }
.t-slider { width: 156px; height: 14px; margin-right: 6px; }
.t-slider::-webkit-slider-runnable-track { height: 2px; background: #444; }
.t-slider::-webkit-slider-thumb { appearance: none; width: 12px; height: 12px; margin-top: -5px; border: 2px solid #5e5e5e; border-radius: 50%; background: var(--panel); }
.trow .t-num { width: 38px; height: 20px; padding-left: 5px; background: #393939; }
.less-more { display: flex; justify-content: space-between; width: 158px; margin: -1px 0 0 51px; }
.advanced { display: flex; align-items: center; width: 100%; height: 14px; margin: 7px 0 8px; padding-left: 8px; color: #b0b0b0; }
.advanced svg { width: 6px; height: 12px; margin-right: 7px; color: #c4c4c4; }
.advanced i { flex: 1; height: 2px; background: var(--edge); }
.t-info { display: grid; grid-template-columns: 28px 73px 74px 1fr; height: 34px; align-items: center; padding-left: 11px; }
.t-info span { display: flex; gap: 4px; }
.t-act { display: flex; justify-content: space-between; align-items: center; height: 29px; padding: 0 5px 0 12px; }
.t-act .flatbtn { width: 140px; }
.t-foot { display: flex; gap: 10px; align-items: center; height: 36px; padding: 0 0 5px 10px; color: #bbb; }
.t-grip { border-top: 2px solid #262626; padding: 1px 0 2px; }

.f-char { left: 1614px; top: 63px; width: 242px; padding-bottom: 8px; }
.char-body { padding: 7px 5px 9px; display: flex; flex-direction: column; gap: 5px; }
.cut-arrow select { border-right: 1px solid var(--frame); width: auto; margin-right: 18px; padding-right: 0; }
.cut-arrow.select::after { right: 6px; }
.float .select::after { color: #c4c4c4; }
.float .off .select::after { color: #555; }
.char-body .select, .char-body .spin { color: #e0e0e0; }
.char-grid { display: grid; grid-template-columns: 21px 82px 1fr 82px; row-gap: 5px; }
.char-grid .g:nth-child(4n + 3) { justify-self: end; width: 24px; }
.g { display: flex; align-items: baseline; font-family: "Liberation Serif", serif; color: var(--icon); line-height: 20px; width: 20px; }
.g b { font-size: 19px; }
.g small { font-size: 12px; font-weight: bold; }
.g .tall { font: 14px/18px "DejaVu Sans", sans-serif; width: 8px; }
.g.sans { font: 13px/20px "Open Sans", sans-serif; }
.g sup { font-size: 9px; line-height: 8px; }
.g.inv span { background: var(--icon); color: var(--panel); line-height: 12px; padding: 0 1px; align-self: center; box-shadow: 0 3px 0 -1px var(--panel), 0 4px 0 -1px var(--icon); }
.g.stack { font: 10px/10px "Open Sans", sans-serif; align-items: center; }
.g .under { border-bottom: 1px solid; line-height: 16px; padding: 0 2px; }
.ring { width: 16px; height: 16px; border: 1px solid; border-radius: 50%; text-align: center; line-height: 14px; font-size: 12px; align-self: center; }
.char-styles { display: flex; gap: 13px; height: 14px; align-items: center; padding-left: 3px; color: var(--icon); font: 15px/14px "Liberation Serif", serif; }
.char-styles button { height: 14px; line-height: 14px; }
.char-styles small { font-size: 12px; }
.char-styles sup, .char-styles sub { font-size: 8px; line-height: 0; }
.char-styles .sup { margin-left: 26px; }
.char-styles .und { margin-left: auto; margin-right: 6px; }
.char-styles button:last-child { margin-right: 7px; }
.char-lang { display: flex; }
.char-lang .select { width: 85px; font-weight: 500; }
.char-lang .aa { flex: 1; padding-left: 29px; font-size: 11px; color: var(--icon); }
.aa b { font-size: 12px; font-weight: normal; vertical-align: -4px; }
.snap-head { display: flex; align-items: center; height: 23px; color: #999; }
.snap-title { align-self: flex-start; }
.snap-head .ag { margin-left: auto; margin-right: 20px; font-size: 12px; color: var(--icon); }
.ag b { border: 1px solid; font-weight: normal; line-height: 12px; display: inline-block; }
.snap-head svg { margin-right: 4px; color: var(--icon); }
.snap-row { display: flex; align-items: center; height: 26px; margin-top: 1px; color: #fff; font-size: 14px; }
.snap-row button { width: 26px; height: 26px; background: #1d1d1d; border: 1px solid var(--frame); border-radius: 2px; margin-right: 8px; line-height: 14px; }
.snap-row button:nth-of-type(2) { margin-right: 11px; }
.snap-row .bare { background: none; border: 0; color: #8a8a8a; }
.snap-row .frame { border: 1px solid; line-height: 14px; display: inline-block; }
.snap-row i { width: 2px; height: 26px; background: var(--edge); margin: 0 auto 0 2px; }
.snap-row button:last-child { margin-right: 0; }
.snap-row .dotA { position: relative; }
.dotA::after { content: ""; position: absolute; left: 10px; top: 4px; width: 4px; height: 4px; border: 1px solid #fff; background: #1d1d1d; }

.f-path { left: -5px; top: 1108px; width: 242px; }
.path-body { padding: 9px 4px 11px; color: #a4a4a4; }
.path-body p { padding-left: 1px; }
.path-row { display: flex; justify-content: space-between; padding: 10px 11px 0 9px; color: #b8b8b8; }
.path-row svg { width: 14px; height: 14px; }
.modes4 { justify-content: flex-start; gap: 23px; padding: 9px 4px 12px 7px; align-items: center; }
.modes4 .flatbtn { margin-left: auto; width: 71px; }

/* taskbar */
.taskbar { flex: none; height: 18px; display: flex; align-items: flex-start; padding-left: 21px; background: #252c33; overflow: hidden; }
.tb { width: 16px; height: 10px; margin-top: 12px; flex: none; }
.win { width: 23px; background: linear-gradient(90deg, #6fe3fd 11px, #252c33 11px 12px, #47b9f5 12px); margin-right: 25px; }
.note { background: #f4f4f4; border-radius: 0 4px 0 0; margin-right: 27px; }
.indd { width: 17px; background: #49021f; border: 1px solid #e0285f; margin-top: 11px; margin-right: 27px; border-radius: 3px; }
.orange { width: 20px; background: radial-gradient(circle at 10px 10px, #fff 5px, #ff4500 6px); border-radius: 8px 8px 0 0; margin-top: 11px; margin-right: 158px; }
.blue { background: #0a6cc4; width: 14px; margin-right: 22px; }
.tb-active { width: 175px; height: 16px; margin-top: 4px; padding-left: 8px; background: #32373f; border: 1px solid #3d434a; border-radius: 4px 4px 0 0; }
.ai { display: block; width: 20px; margin-top: 8px; background: #3a0504; border-radius: 3px; }
.white { margin: 13px auto 0 13px; width: 22px; background: #f4f4f4; border-top: 2px solid #777; }
.tray { margin-right: 59px; border: 1px solid #fff; margin-top: 16px; }
time { font-size: 12px; line-height: 18px; margin-right: 20px; color: #fff; }
```

FILE: script.js
```js
// colors of the recent strip and the swatch list
const recent = ['#ececec', '#cbccce', '#c4c4c4', '#e8e0d7', '#a8a8a8', '#fbabab', '#ffffff', '#fdc1ae', '#a7def3', '#fdd3ae', '#fdc1ae', '#fbb7b3', '#a3ddbb'];

const swatches = [
    ['m-none', 'sw-reg', '#ffffff', '#a8a8a8', '#fbabab', '#fff6b0', '#9bdabb', '#9bdff9', '#adafd3', '#fbaad1'],
    ['#e7adb1', '#fbb7b3', '#fdc3ae', '#fdd3ae', '#fee0b9', '#faf7bb', '#edf0b7', '#cfe6b9', '#a7e0ba', '#9dd6ba'],
    ['#9cc5b5', '#a0e3c9', '#9fdcd8', '#a7def3', '#9fcae3', '#a9b0d4', '#a9a8bf', '#c2add3', '#d3abd1', '#daabc1'],
    ['#f2abbf', '#fcafcb', '#e8e0d7', '#d7cec9', '#c6c3be', '#bcb7b3', '#e6d6c6', '#dcc9b7', '#cfbdb3', '#c5b7a9'],
    ['#bfaea4', '#b1a9a4', 'sw-bw', 'sw-warm', 'sw-sky', 'sw-ball', 'sw-leaf', 'sw-vine'],
    ['folder', '#a8a8a8', '#b2b2b2', '#bbbcbd', '#c4c4c4', '#cdcecf', '#d4d5d6', '#dbdcdd', '#e3e4e5', '#ececec'],
    ['#f4f6f6', '#fafafa'],
    ['folder', '#fbabab', '#fdc3ae', '#ffeeb5', '#9bd9ba', '#a9b2d3', '#cab2d3']
];

function cell(value) {
    if (value === 'folder') return '<svg><use href="#folder"/></svg>';
    if (value[0] === '#') return '<i style="background:' + value + '"></i>';
    return '<i class="' + value + '"></i>';
}

document.getElementById('recent').innerHTML = recent.map(cell).join('');
document.getElementById('swatches').innerHTML = swatches.map(function (row) {
    const group = row[0] === 'folder' ? ' group' : '';
    return '<div class="swatch-row' + group + '">' + row.map(cell).join('') + '</div>';
}).join('');
```
